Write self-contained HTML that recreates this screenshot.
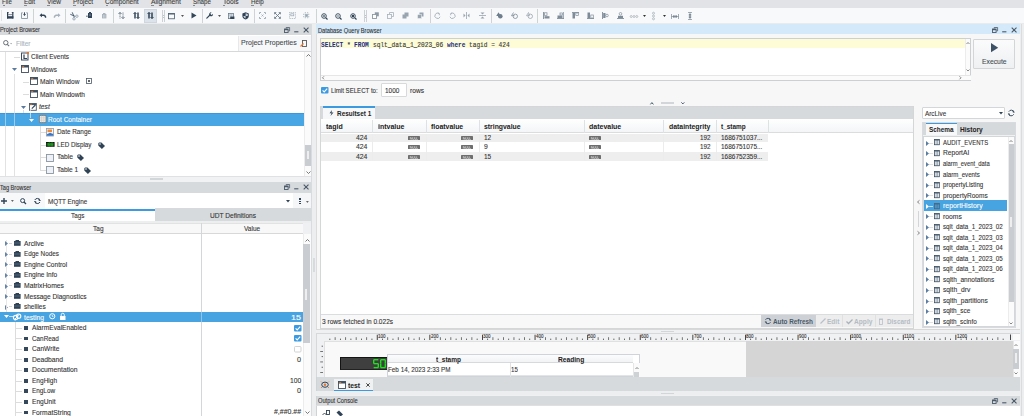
<!DOCTYPE html><html><head><meta charset="utf-8"><style>
*{margin:0;padding:0;box-sizing:border-box}
html,body{width:1024px;height:416px;overflow:hidden;background:#eef0f2;font-family:"Liberation Sans",sans-serif;color:#333}
div{position:absolute}
.t{white-space:nowrap;transform-origin:0 0;-webkit-text-stroke:0.1px currentColor}
svg{position:absolute;overflow:visible}
</style></head><body>
<div style="left:0px;top:0px;width:1024px;height:8px;background:#e1e3e6"></div>
<div class="t" style="left:2.4px;top:-2.05px;font-size:7.5px;line-height:7.5px;color:#3c3c3c;font-family:'Liberation Sans',sans-serif;transform:scale(0.8110,1.0);transform-origin:0 6.35px;">File</div>
<div style="left:2.6999999999999997px;top:5.2px;width:2.4px;height:0.6px;background:#8a8a8a"></div>
<div class="t" style="left:24px;top:-2.05px;font-size:7.5px;line-height:7.5px;color:#3c3c3c;font-family:'Liberation Sans',sans-serif;transform:scale(0.8512,1.0);transform-origin:0 6.35px;">Edit</div>
<div style="left:24.3px;top:5.2px;width:2.4px;height:0.6px;background:#8a8a8a"></div>
<div class="t" style="left:47px;top:-2.05px;font-size:7.5px;line-height:7.5px;color:#3c3c3c;font-family:'Liberation Sans',sans-serif;transform:scale(0.8685,1.0);transform-origin:0 6.35px;">View</div>
<div style="left:47.3px;top:5.2px;width:2.4px;height:0.6px;background:#8a8a8a"></div>
<div class="t" style="left:73px;top:-2.05px;font-size:7.5px;line-height:7.5px;color:#3c3c3c;font-family:'Liberation Sans',sans-serif;transform:scale(0.8568,1.0);transform-origin:0 6.35px;">Project</div>
<div style="left:73.3px;top:5.2px;width:2.4px;height:0.6px;background:#8a8a8a"></div>
<div class="t" style="left:105.2px;top:-2.05px;font-size:7.5px;line-height:7.5px;color:#3c3c3c;font-family:'Liberation Sans',sans-serif;transform:scale(0.8666,1.0);transform-origin:0 6.35px;">Component</div>
<div style="left:105.5px;top:5.2px;width:2.4px;height:0.6px;background:#8a8a8a"></div>
<div class="t" style="left:151px;top:-2.05px;font-size:7.5px;line-height:7.5px;color:#3c3c3c;font-family:'Liberation Sans',sans-serif;transform:scale(0.8936,1.0);transform-origin:0 6.35px;">Alignment</div>
<div style="left:151.3px;top:5.2px;width:2.4px;height:0.6px;background:#8a8a8a"></div>
<div class="t" style="left:192.5px;top:-2.05px;font-size:7.5px;line-height:7.5px;color:#3c3c3c;font-family:'Liberation Sans',sans-serif;transform:scale(0.8300,1.0);transform-origin:0 6.35px;">Shape</div>
<div style="left:192.8px;top:5.2px;width:2.4px;height:0.6px;background:#8a8a8a"></div>
<div class="t" style="left:222.8px;top:-2.05px;font-size:7.5px;line-height:7.5px;color:#3c3c3c;font-family:'Liberation Sans',sans-serif;transform:scale(0.8910,1.0);transform-origin:0 6.35px;">Tools</div>
<div style="left:223.10000000000002px;top:5.2px;width:2.4px;height:0.6px;background:#8a8a8a"></div>
<div class="t" style="left:251px;top:-2.05px;font-size:7.5px;line-height:7.5px;color:#3c3c3c;font-family:'Liberation Sans',sans-serif;transform:scale(0.8299,1.0);transform-origin:0 6.35px;">Help</div>
<div style="left:251.3px;top:5.2px;width:2.4px;height:0.6px;background:#8a8a8a"></div>
<div style="left:0px;top:8px;width:1024px;height:15px;background:#f8f9fa"></div>
<div style="left:0px;top:22.5px;width:1024px;height:1.5px;background:#e9ebed"></div>
<div style="left:33.4px;top:9px;width:0.9px;height:13.5px;background:#d0d3d6"></div>
<div style="left:65.4px;top:9px;width:0.9px;height:13.5px;background:#d0d3d6"></div>
<div style="left:112.5px;top:9px;width:0.9px;height:13.5px;background:#d0d3d6"></div>
<div style="left:201.9px;top:9px;width:0.9px;height:13.5px;background:#d0d3d6"></div>
<div style="left:254.2px;top:9px;width:0.9px;height:13.5px;background:#d0d3d6"></div>
<div style="left:316px;top:9px;width:0.9px;height:13.5px;background:#d0d3d6"></div>
<div style="left:429.5px;top:9px;width:0.9px;height:13.5px;background:#d0d3d6"></div>
<div style="left:490.5px;top:9px;width:0.9px;height:13.5px;background:#d0d3d6"></div>
<div style="left:537.3px;top:9px;width:0.9px;height:13.5px;background:#d0d3d6"></div>
<div style="left:1px;top:10px;width:1.2px;height:11px;background:#dfe1e3"></div>
<div style="left:143.7px;top:9px;width:13.3px;height:14px;background:#dde3ea;border:1px solid #cfd6de"></div>
<div style="left:161.89999999999998px;top:10px;width:3.6px;height:12px;border-left:0.8px solid #cdd1d5;border-right:0.8px solid #cdd1d5"></div>
<div style="left:163.2px;top:14.5px;width:1px;height:1px;background:#c0c5ca"></div>
<div style="left:163.2px;top:16.5px;width:1px;height:1px;background:#c0c5ca"></div>
<div style="left:363.7px;top:10px;width:3.6px;height:12px;border-left:0.8px solid #cdd1d5;border-right:0.8px solid #cdd1d5"></div>
<div style="left:365.0px;top:14.5px;width:1px;height:1px;background:#c0c5ca"></div>
<div style="left:365.0px;top:16.5px;width:1px;height:1px;background:#c0c5ca"></div>
<svg style="left:6.6000000000000005px;top:12.399999999999999px;" width="7" height="7" viewBox="0 0 7 7"><path d="M0.6 0.3v6.2M5.8 0.3v6.2" stroke="#2f4256" stroke-width="1.2"/><path d="M0 0.6h1.6M4.8 0.6h1.6" stroke="#2f4256" stroke-width="1"/><rect x="0" y="4.2" width="6.4" height="2.4" fill="#2f4256"/><path d="M1.2 2.6h4" stroke="#2f4256" stroke-width="0.6"/></svg>
<svg style="left:21.3px;top:12.4px;" width="7" height="7" viewBox="0 0 7 7"><path d="M0.5 0.8v5.7h6v-5.7M0.5 0.8h1.3M5.2 0.8h1.3" fill="none" stroke="#8796a5" stroke-width="0.9"/><path d="M3.5 0.3v3M2.4 2.3l1.1 1.1 1.1-1.1" stroke="#3c4d60" stroke-width="1" fill="none"/></svg>
<svg style="left:39px;top:13.3px;" width="7" height="5" viewBox="0 0 7 5"><path d="M0.5 2.2l2.5-2v4z" fill="#2f4256"/><path d="M2.5 2.2h2a2 2 0 0 1 2 2.5" stroke="#2f4256" stroke-width="1.4" fill="none"/></svg>
<svg style="left:54px;top:13.3px;" width="7" height="5" viewBox="0 0 7 5"><path d="M6.5 2.2l-2.5-2v4z" fill="#a6b1bc"/><path d="M4.5 2.2h-2a2 2 0 0 0-2 2.5" stroke="#a6b1bc" stroke-width="1.4" fill="none"/></svg>
<svg style="left:70.3px;top:11.8px;" width="8.5" height="8.2" viewBox="0 0 8.5 8.2"><path d="M2.2 0.3l1.8 4.2M0.3 2.3l4.2 1.8" stroke="#3d5064" stroke-width="0.9"/><path d="M4 4.2l1.6 0.1M4 4.3l0 1.8" stroke="#7a8a99" stroke-width="0.8"/><circle cx="6.9" cy="4.2" r="1.2" fill="none" stroke="#8a99a8" stroke-width="0.8"/><circle cx="4" cy="6.8" r="1.2" fill="none" stroke="#8a99a8" stroke-width="0.8"/></svg>
<svg style="left:86.2px;top:12.4px;" width="6" height="6" viewBox="0 0 6 6"><rect x="2" y="1" width="4" height="5" fill="#2f4256"/><rect x="3" y="0" width="2" height="1.2" fill="#2f4256"/><path d="M3 2.2h2M3 3.4h2" stroke="#8898a8" stroke-width="0.5"/><path d="M0 4.2h1.8" stroke="#4a5d70" stroke-width="0.9"/></svg>
<svg style="left:101.8px;top:13px;" width="4.5" height="5.5" viewBox="0 0 4.5 5.5"><rect x="0" y="1" width="4.4" height="4.4" fill="#aab4be"/><rect x="1" y="0" width="2.4" height="1" fill="#aab4be"/><path d="M1.5 1.8v3M2.9 1.8v3" stroke="#dfe3e7" stroke-width="0.5"/></svg>
<svg style="left:117.5px;top:12.2px;" width="7" height="7" viewBox="0 0 7 7"><path d="M2 0.5v6M5 0.5v6" stroke="#5d6f82" stroke-width="0.9" stroke-dasharray="1.2 0.6"/><path d="M0.5 2l1.5-1.5 1.5 1.5M3.5 5l1.5 1.5 1.5-1.5" stroke="#4d5f72" stroke-width="0.9" fill="none"/></svg>
<svg style="left:132.5px;top:12.2px;" width="7" height="7" viewBox="0 0 7 7"><path d="M2 0.5v6M5 0.5v6" stroke="#33465a" stroke-width="1.5"/><path d="M0.5 2l1.5-1.5 1.5 1.5M3.5 5l1.5 1.5 1.5-1.5" stroke="#33465a" stroke-width="1" fill="none"/></svg>
<svg style="left:146.5px;top:12.2px;" width="7" height="7" viewBox="0 0 7 7"><path d="M2 0.5v6M5 0.5v6" stroke="#2f4256" stroke-width="1.5"/><path d="M0.5 2l1.5-1.5 1.5 1.5M3.5 5l1.5 1.5 1.5-1.5" stroke="#2f4256" stroke-width="1" fill="none"/></svg>
<svg style="left:168px;top:12.7px;" width="7" height="6.2" viewBox="0 0 7 6.2"><rect x="0.4" y="0.4" width="6.2" height="5.4" fill="none" stroke="#4a5d70" stroke-width="0.8"/><rect x="0.4" y="0.4" width="6.2" height="1.1" fill="#4a5d70"/></svg>
<svg style="left:181px;top:15px;" width="3" height="2" viewBox="0 0 3 2"><path d="M0 0h3l-1.5 2z" fill="#555"/></svg>
<svg style="left:190.5px;top:12.3px;" width="6" height="7" viewBox="0 0 6 7"><path d="M0.5 0.5l5 3-5 3z" fill="#33465a"/></svg>
<svg style="left:206px;top:12.2px;" width="7" height="7" viewBox="0 0 7 7"><path d="M0.8 6.2l3.2-3.2" stroke="#33465a" stroke-width="1.2" stroke-linecap="round"/><path d="M3.4 3.4a2 2 0 0 1 2.2-3l-1.2 1.2 0.4 1 1 0.4 1.2-1.2a2 2 0 0 1-3 2.2z" fill="#33465a"/></svg>
<svg style="left:218px;top:15px;" width="3" height="2" viewBox="0 0 3 2"><path d="M0 0h3l-1.5 2z" fill="#555"/></svg>
<svg style="left:228px;top:12.7px;" width="6.5" height="6" viewBox="0 0 6.5 6"><rect x="0.4" y="0.4" width="5" height="5.2" fill="none" stroke="#6a7b8c" stroke-width="0.8"/><path d="M0.4 2h5M2 0.4v5.2M3.7 0.4v5.2" stroke="#8a99a8" stroke-width="0.5"/><rect x="2.2" y="3.5" width="4.2" height="2.5" fill="#33465a"/></svg>
<svg style="left:241.8px;top:12.2px;" width="7.2" height="7.5" viewBox="0 0 7.2 7.5"><path d="M3.6 0.3l3.2 1.1v2.6c0 1.9-1.4 2.9-3.2 3.5-1.8-0.6-3.2-1.6-3.2-3.5v-2.6z" fill="#2f4256"/><path d="M3.6 1.3l2.2 0.8v1.9h-2.2zM3.6 4h-2.2c0.1 1.2 1 1.9 2.2 2.4z" fill="#c7d0d9"/></svg>
<svg style="left:259.3px;top:12.2px;" width="7" height="7" viewBox="0 0 7 7"><path d="M0.5 2v-1.5h1.5M5 0.5h1.5v1.5M6.5 5v1.5h-1.5M2 6.5h-1.5v-1.5" fill="none" stroke="#97a5b2" stroke-width="0.9"/><path d="M2.5 2.5l2 2M4.5 2.5l-2 2" stroke="#97a5b2" stroke-width="0.7"/></svg>
<svg style="left:274.2px;top:12.2px;" width="7" height="7" viewBox="0 0 7 7"><path d="M0.8 0.8l5.4 5.4M6.2 0.8l-5.4 5.4" stroke="#6d7d8c" stroke-width="0.9"/><path d="M0.5 2.3v-1.8h1.8M4.7 0.5h1.8v1.8M6.5 4.7v1.8h-1.8M2.3 6.5h-1.8v-1.8" fill="none" stroke="#6d7d8c" stroke-width="0.8"/></svg>
<svg style="left:289.0px;top:12.2px;" width="7" height="7" viewBox="0 0 7 7"><rect x="0.5" y="0.5" width="6" height="6" fill="none" stroke="#97a5b2" stroke-width="0.7" stroke-dasharray="1 0.8"/><rect x="1.8" y="1.8" width="3" height="2" fill="none" stroke="#97a5b2" stroke-width="0.7"/></svg>
<svg style="left:303.1px;top:12.2px;" width="7" height="7" viewBox="0 0 7 7"><path d="M0 2.3h7M0 4.7h7M2.3 0v7M4.7 0v7" stroke="#97a5b2" stroke-width="0.7" stroke-dasharray="1 0.7"/><rect x="2.3" y="2.3" width="2.4" height="2.4" fill="#97a5b2"/></svg>
<svg style="left:320.9px;top:12.5px;" width="7" height="7" viewBox="0 0 7 7"><circle cx="3" cy="3" r="2.3" fill="none" stroke="#2f4256" stroke-width="0.9"/><path d="M4.6 4.6l1.9 1.9" stroke="#2f4256" stroke-width="1.2"/><path d="M1.9 3h2.2M3 1.9v2.2" stroke="#2f4256" stroke-width="0.7"/></svg>
<svg style="left:335.4px;top:12.5px;" width="7" height="7" viewBox="0 0 7 7"><circle cx="3" cy="3" r="2.3" fill="none" stroke="#2f4256" stroke-width="0.9"/><path d="M4.6 4.6l1.9 1.9" stroke="#2f4256" stroke-width="1.2"/><path d="M1.9 3h2.2" stroke="#2f4256" stroke-width="0.7"/></svg>
<svg style="left:350.3px;top:12.5px;" width="7" height="7" viewBox="0 0 7 7"><circle cx="3" cy="3" r="2.3" fill="none" stroke="#2f4256" stroke-width="0.9"/><path d="M4.6 4.6l1.9 1.9" stroke="#2f4256" stroke-width="1.2"/><rect x="1.9" y="1.9" width="2.2" height="2.2" fill="#2f4256"/></svg>
<svg style="left:372.1px;top:12.3px;" width="7" height="7" viewBox="0 0 7 7"><rect x="2.8" y="0.3" width="4" height="4" fill="#8d99a5"/><rect x="0.5" y="2.5" width="4" height="4" fill="#fff" stroke="#8d99a5" stroke-width="0.9"/></svg>
<svg style="left:387.0px;top:12.3px;" width="7" height="7" viewBox="0 0 7 7"><path d="M2.5 2v-1.5h4v4h-1.5" fill="none" stroke="#a6b0ba" stroke-width="0.8"/><rect x="0.5" y="2.5" width="4" height="4" fill="none" stroke="#a6b0ba" stroke-width="0.8"/></svg>
<svg style="left:401.8px;top:12.3px;" width="7" height="7" viewBox="0 0 7 7"><rect x="2.5" y="0.5" width="4" height="4" fill="#98a4af"/><rect x="0.5" y="2.5" width="4" height="4" fill="#98a4af"/></svg>
<svg style="left:416.7px;top:12.3px;" width="7" height="7" viewBox="0 0 7 7"><rect x="2.5" y="0.5" width="4" height="4" fill="#98a4af"/><rect x="0.5" y="2.5" width="4" height="4" fill="#98a4af" stroke="#f8f9fa" stroke-width="0.5"/></svg>
<svg style="left:433.8px;top:12.3px;" width="7" height="7" viewBox="0 0 7 7"><path d="M5.2 1.6a2.7 2.7 0 1 0 0.9 3.2" fill="none" stroke="#a3aeb9" stroke-width="0.9"/><path d="M4 0.8l1.5 0.9-0.3 1.6" fill="none" stroke="#a3aeb9" stroke-width="0.8"/></svg>
<svg style="left:448.7px;top:12.3px;" width="7" height="7" viewBox="0 0 7 7"><path d="M1.8 1.6a2.7 2.7 0 1 1 -0.9 3.2" fill="none" stroke="#a3aeb9" stroke-width="0.9"/><path d="M3 0.8l-1.5 0.9 0.3 1.6" fill="none" stroke="#a3aeb9" stroke-width="0.8"/></svg>
<svg style="left:463px;top:12.3px;" width="7" height="7" viewBox="0 0 7 7"><path d="M3.5 0v7" stroke="#98a3ae" stroke-width="0.8"/><path d="M0.5 1.5l2 2-2 2zM6.5 1.5l-2 2 2 2z" fill="#98a3ae"/></svg>
<svg style="left:478.5px;top:12.3px;" width="7" height="7" viewBox="0 0 7 7"><path d="M0 3.5h7" stroke="#98a3ae" stroke-width="0.8"/><path d="M1.5 0.5l2 2 2-2zM1.5 6.5l2-2 2 2z" fill="#98a3ae"/></svg>
<svg style="left:496.3px;top:12.3px;" width="7" height="7" viewBox="0 0 7 7"><path d="M2.5 0.3l-2.3 3.6h4.6z" fill="#6f7e8d"/><circle cx="4.3" cy="4.3" r="2.3" fill="#6f7e8d"/></svg>
<svg style="left:511.2px;top:12.3px;" width="7" height="7" viewBox="0 0 7 7"><path d="M2.5 0.5l-2 3.2h3" fill="none" stroke="#7d8b99" stroke-width="0.8"/><circle cx="4.3" cy="4.3" r="2.2" fill="none" stroke="#7d8b99" stroke-width="0.8"/></svg>
<svg style="left:526px;top:12.3px;" width="7" height="7" viewBox="0 0 7 7"><path d="M2.5 0.5l-2 3.2h3z" fill="none" stroke="#98a4b0" stroke-width="0.7"/><circle cx="4.3" cy="4.3" r="2.2" fill="none" stroke="#98a4b0" stroke-width="0.8"/></svg>
<svg style="left:542.5px;top:12.3px;" width="7" height="7" viewBox="0 0 7 7"><path d="M0.5 0v7" stroke="#7e8c9a" stroke-width="0.9"/><rect x="1.5" y="4.2" width="5" height="2.3" fill="#7e8c9a"/><rect x="1.5" y="0.8" width="2.5" height="2.5" fill="none" stroke="#7e8c9a" stroke-width="0.7"/></svg>
<svg style="left:557.3px;top:12.3px;" width="7" height="7" viewBox="0 0 7 7"><path d="M0 6.5h7" stroke="#7e8c9a" stroke-width="0.9"/><rect x="0.5" y="3.5" width="5" height="2.5" fill="#7e8c9a"/><rect x="3" y="1" width="2.5" height="2" fill="none" stroke="#7e8c9a" stroke-width="0.7"/><path d="M6.5 0v7" stroke="#7e8c9a" stroke-width="0.7"/></svg>
<svg style="left:572.1px;top:12.3px;" width="7" height="7" viewBox="0 0 7 7"><path d="M0 0.5h7" stroke="#7e8c9a" stroke-width="0.9"/><rect x="0.5" y="1" width="2.5" height="5.5" fill="#7e8c9a"/><rect x="3.8" y="1" width="2.5" height="2.5" fill="none" stroke="#7e8c9a" stroke-width="0.7"/></svg>
<svg style="left:587.0px;top:12.3px;" width="7" height="7" viewBox="0 0 7 7"><path d="M0 6.5h7" stroke="#7e8c9a" stroke-width="0.9"/><rect x="0.5" y="0.5" width="2.5" height="5.5" fill="#7e8c9a"/><rect x="3.8" y="3" width="2.5" height="3" fill="none" stroke="#7e8c9a" stroke-width="0.7"/></svg>
<svg style="left:601.8px;top:12.3px;" width="7" height="7" viewBox="0 0 7 7"><path d="M0.5 0v7" stroke="#7e8c9a" stroke-width="0.9"/><rect x="1.2" y="1" width="2.3" height="5" fill="#7e8c9a"/><circle cx="5" cy="3.5" r="1.3" fill="none" stroke="#7e8c9a" stroke-width="0.7"/></svg>
<svg style="left:616.8px;top:12.3px;" width="7" height="7" viewBox="0 0 7 7"><path d="M0 6.5h7" stroke="#7e8c9a" stroke-width="0.9"/><rect x="1" y="3.8" width="5" height="2.3" fill="#7e8c9a"/><circle cx="3.5" cy="1.8" r="1.3" fill="none" stroke="#7e8c9a" stroke-width="0.7"/></svg>
<svg style="left:630px;top:14.5px;" width="8" height="3" viewBox="0 0 8 3"><circle cx="1.2" cy="1.5" r="1" fill="none" stroke="#a0aab4" stroke-width="0.7"/><circle cx="4" cy="1.5" r="1" fill="none" stroke="#a0aab4" stroke-width="0.7"/><circle cx="6.8" cy="1.5" r="1" fill="none" stroke="#a0aab4" stroke-width="0.7"/></svg>
<svg style="left:643px;top:15px;" width="3" height="2" viewBox="0 0 3 2"><path d="M0 0h3l-1.5 2z" fill="#333"/></svg>
<svg style="left:651.5px;top:12px;" width="3" height="8" viewBox="0 0 3 8"><circle cx="1.5" cy="1.2" r="1" fill="none" stroke="#a0aab4" stroke-width="0.7"/><circle cx="1.5" cy="4" r="1" fill="none" stroke="#a0aab4" stroke-width="0.7"/><circle cx="1.5" cy="6.8" r="1" fill="none" stroke="#a0aab4" stroke-width="0.7"/></svg>
<svg style="left:662.5px;top:15px;" width="3" height="2" viewBox="0 0 3 2"><path d="M0 0h3l-1.5 2z" fill="#333"/></svg>
<svg style="left:671px;top:13.5px;" width="8" height="5" viewBox="0 0 8 5"><path d="M0.5 0v5M7.5 0v5M0.5 2.5h7" stroke="#7d8b99" stroke-width="0.7"/><rect x="2.2" y="1.3" width="1.4" height="2.4" fill="#6d7b89"/><rect x="4.4" y="1.3" width="1.4" height="2.4" fill="#6d7b89"/></svg>
<svg style="left:686.5px;top:12px;" width="6" height="8" viewBox="0 0 6 8"><path d="M1 0.5h4M1 7.5h4M3 0.5v7" stroke="#7d8b99" stroke-width="0.7"/><rect x="1.8" y="2.2" width="2.4" height="1.4" fill="#6d7b89"/><rect x="1.8" y="4.4" width="2.4" height="1.4" fill="#6d7b89"/></svg>
<div style="left:0px;top:24px;width:311.5px;height:11px;background:#d7dadd"></div>
<div class="t" style="left:0px;top:27.40px;font-size:6.5px;line-height:6.5px;color:#333;font-family:'Liberation Sans',sans-serif;transform:scale(0.8720,1.0);transform-origin:0 5.50px;">Project Browser</div>
<svg style="left:284px;top:26.5px;" width="26" height="6" viewBox="0 0 26 6"><rect x="0.5" y="2" width="3.6" height="3.5" fill="none" stroke="#4a5868" stroke-width="0.9"/><rect x="0.5" y="2" width="3.6" height="1.2" fill="#4a5868"/><path d="M2.2 1.6v-1.1h3.4v3.4h-1.1" fill="none" stroke="#4a5868" stroke-width="0.8"/><path d="M10.2 4.8h4.2" stroke="#4a5868" stroke-width="1.1"/><path d="M19.7 0.6l4.8 4.8M24.5 0.6l-4.8 4.8" stroke="#4a5868" stroke-width="1.1"/></svg>
<div style="left:0px;top:35px;width:311.5px;height:16px;background:#fff"></div>
<div style="left:0px;top:50.5px;width:311.5px;height:1.2px;background:#d6d8da"></div>
<svg style="left:3px;top:40.3px;" width="9" height="7" viewBox="0 0 9 7"><circle cx="2.8" cy="2.7" r="2.2" fill="none" stroke="#6a7078" stroke-width="1"/><path d="M4.3 4.3l1.8 1.8" stroke="#6a7078" stroke-width="1.1"/><path d="M7.2 3.3h1.8l-0.9 1z" fill="#6a7078"/></svg>
<div class="t" style="left:15.6px;top:39.67px;font-size:7px;line-height:7px;color:#a9b2bb;font-family:'Liberation Sans',sans-serif;transform:scale(0.9258,1.0);transform-origin:0 5.93px;">Filter</div>
<div style="left:237.5px;top:35.5px;width:74px;height:15px;background:#f6f7f8;border-left:1px solid #e8e8e8"></div>
<div class="t" style="left:241.3px;top:39.11px;font-size:7.2px;line-height:7.2px;color:#454b52;font-family:'Liberation Sans',sans-serif;transform:scale(0.9752,1.0);transform-origin:0 6.09px;">Project Properties</div>
<svg style="left:300px;top:39.5px;" width="7" height="7" viewBox="0 0 7 7"><rect x="2.5" y="0.5" width="4" height="6" fill="none" stroke="#555" stroke-width="0.9"/><path d="M0.5 6.5l3-3" stroke="#e8772e" stroke-width="1.3"/></svg>
<div style="left:0px;top:52px;width:304px;height:124px;background:#fff"></div>
<div style="left:5px;top:52px;width:0px;height:124px;border-left:1px solid #e2e2e2"></div>
<div style="left:13.8px;top:74px;width:0px;height:102px;border-left:1px solid #e2e2e2"></div>
<div style="left:22.5px;top:110px;width:0px;height:8px;border-left:1px solid #dcdcdc"></div>
<div style="left:39.9px;top:126px;width:0px;height:44px;border-left:1px solid #dcdcdc"></div>
<div style="left:0px;top:113.3px;width:304px;height:12.3px;background:#48a6e4;border-top:1px solid #3b98de"></div>
<div class="t" style="left:31px;top:53.25px;font-size:7.5px;line-height:7.5px;color:#333;font-family:'Liberation Sans',sans-serif;transform:scale(0.8600,1.0);transform-origin:0 6.35px;">Client Events</div>
<div class="t" style="left:31px;top:65.75px;font-size:7.5px;line-height:7.5px;color:#333;font-family:'Liberation Sans',sans-serif;transform:scale(0.8513,1.0);transform-origin:0 6.35px;">Windows</div>
<div class="t" style="left:40px;top:78.25px;font-size:7.5px;line-height:7.5px;color:#333;font-family:'Liberation Sans',sans-serif;transform:scale(0.8753,1.0);transform-origin:0 6.35px;">Main Window</div>
<div class="t" style="left:40px;top:90.75px;font-size:7.5px;line-height:7.5px;color:#333;font-family:'Liberation Sans',sans-serif;transform:scale(0.8778,1.0);transform-origin:0 6.35px;">Main Windowth</div>
<div class="t" style="left:38.9px;top:103.25px;font-size:7.5px;line-height:7.5px;color:#333;font-style:italic;font-family:'Liberation Sans',sans-serif;transform:scale(0.8935,1.0);transform-origin:0 6.35px;">test</div>
<div class="t" style="left:48px;top:115.75px;font-size:7.5px;line-height:7.5px;color:#ffffff;font-family:'Liberation Sans',sans-serif;transform:scale(0.8723,1.0);transform-origin:0 6.35px;">Root Container</div>
<div class="t" style="left:56.6px;top:128.25px;font-size:7.5px;line-height:7.5px;color:#333;font-family:'Liberation Sans',sans-serif;transform:scale(0.8495,1.0);transform-origin:0 6.35px;">Date Range</div>
<div class="t" style="left:56.6px;top:140.75px;font-size:7.5px;line-height:7.5px;color:#333;font-family:'Liberation Sans',sans-serif;transform:scale(0.8337,1.0);transform-origin:0 6.35px;">LED Display</div>
<div class="t" style="left:56.6px;top:153.25px;font-size:7.5px;line-height:7.5px;color:#333;font-family:'Liberation Sans',sans-serif;transform:scale(0.8924,1.0);transform-origin:0 6.35px;">Table</div>
<div class="t" style="left:56.6px;top:165.75px;font-size:7.5px;line-height:7.5px;color:#333;font-family:'Liberation Sans',sans-serif;transform:scale(0.8725,1.0);transform-origin:0 6.35px;">Table 1</div>
<svg style="left:21px;top:51.8px;" width="8" height="8.5" viewBox="0 0 8 8.5"><rect x="0.5" y="1" width="6.5" height="7" fill="#fff" stroke="#3d4d5e" stroke-width="1"/><path d="M3 2.5v4h3" stroke="#2f4256" stroke-width="1.2" fill="none"/><rect x="6" y="0" width="2" height="2" fill="#e8772e"/></svg>
<svg style="left:21px;top:64.5px;" width="8" height="8" viewBox="0 0 8 8"><rect x="0.5" y="0.5" width="7" height="7" fill="#fff" stroke="#3d4d5e" stroke-width="0.9"/><rect x="0.5" y="0.5" width="7" height="2" fill="#3d4d5e"/><rect x="1.2" y="1" width="2" height="0.9" fill="#e07a2e"/></svg>
<svg style="left:29.5px;top:77.3px;" width="8" height="8" viewBox="0 0 8 8"><rect x="0.5" y="0.5" width="7" height="7" fill="#fff" stroke="#3d4d5e" stroke-width="0.9"/><rect x="0.5" y="0.5" width="7" height="2" fill="#3d4d5e"/><rect x="1.2" y="1" width="2" height="0.9" fill="#e07a2e"/></svg>
<svg style="left:85.5px;top:77.6px;" width="6" height="6" viewBox="0 0 6 6"><rect x="0.5" y="0.5" width="5" height="5" fill="#fff" stroke="#4a5868" stroke-width="0.8"/><circle cx="3" cy="3" r="1" fill="#333"/></svg>
<svg style="left:29.5px;top:90px;" width="8" height="8" viewBox="0 0 8 8"><rect x="0.5" y="0.5" width="7" height="7" fill="#fff" stroke="#3d4d5e" stroke-width="0.9"/><rect x="0.5" y="0.5" width="7" height="2" fill="#3d4d5e"/><rect x="1.2" y="1" width="2" height="0.9" fill="#e07a2e"/></svg>
<svg style="left:29.2px;top:102.8px;" width="8" height="8" viewBox="0 0 8 8"><rect x="0.5" y="0.5" width="6.8" height="6.8" fill="#fff" stroke="#4a5a6a" stroke-width="0.9"/><rect x="0.5" y="0.5" width="6.8" height="1.6" fill="#4a5a6a"/><rect x="1.1" y="0.9" width="1.8" height="0.8" fill="#e07a2e"/><path d="M2.8 5.6l3.6-3.6" stroke="#2f4256" stroke-width="1.1"/></svg>
<div style="left:5px;top:113.3px;width:0px;height:12.3px;border-left:1px solid rgba(255,255,255,0.45)"></div>
<div style="left:13.8px;top:113.3px;width:0px;height:12.3px;border-left:1px solid rgba(255,255,255,0.45)"></div>
<div style="left:30.3px;top:110px;width:0px;height:8px;border-left:1px solid rgba(255,255,255,0.6)"></div>
<svg style="left:38.5px;top:115px;" width="7.5" height="8" viewBox="0 0 7.5 8"><rect x="0.5" y="0.5" width="6.5" height="7" fill="#eceae6" stroke="#8a7f76" stroke-width="0.9"/><path d="M2.6 0.5v7M4.8 0.5v7M0.5 2.8h6.5M0.5 5.2h6.5" stroke="#c8c2bc" stroke-width="0.5"/></svg>
<svg style="left:46px;top:128px;" width="8" height="8.5" viewBox="0 0 8 8.5"><rect x="0.5" y="0.5" width="7" height="7.5" fill="#f4f6f8" stroke="#8d99a5" stroke-width="0.8"/><rect x="1.5" y="1.5" width="4.5" height="2.6" fill="#ef8a35"/><path d="M1 6.2l3-1.5 3.2 1.2v1.8h-6.2z" fill="#3877c8"/></svg>
<svg style="left:45.8px;top:142.3px;" width="8.6" height="4.8" viewBox="0 0 8.6 4.8"><rect x="0" y="0" width="8.6" height="4.8" fill="#141414"/><path d="M1.2 1v2.8M2.6 1h1.6v2.8h-1.6zM5.2 1h1.8v2.8h-1.8zM2.6 2.4h1.6M5.2 2.4h1.8" fill="none" stroke="#28c828" stroke-width="0.7"/></svg>
<svg style="left:46px;top:153.5px;" width="8" height="8" viewBox="0 0 8 8"><rect x="0.5" y="0.5" width="7" height="7" fill="#eef2f6" stroke="#8a96a2" stroke-width="0.9"/></svg>
<svg style="left:46px;top:166px;" width="8" height="8" viewBox="0 0 8 8"><rect x="0.5" y="0.5" width="7" height="7" fill="#eef2f6" stroke="#8a96a2" stroke-width="0.9"/></svg>
<svg style="left:97.5px;top:141.5px;" width="7" height="7" viewBox="0 0 7 7"><path d="M0.3 1.2v2.3l3.6 3.6 3.1-3.1-3.6-3.6h-2.3z" fill="#2f4256"/><circle cx="2" cy="2" r="0.8" fill="#fff"/></svg>
<svg style="left:77px;top:154px;" width="7" height="7" viewBox="0 0 7 7"><path d="M0.3 1.2v2.3l3.6 3.6 3.1-3.1-3.6-3.6h-2.3z" fill="#2f4256"/><circle cx="2" cy="2" r="0.8" fill="#fff"/></svg>
<svg style="left:84px;top:166.5px;" width="7" height="7" viewBox="0 0 7 7"><path d="M0.3 1.2v2.3l3.6 3.6 3.1-3.1-3.6-3.6h-2.3z" fill="#2f4256"/><circle cx="2" cy="2" r="0.8" fill="#fff"/></svg>
<svg style="left:12px;top:67.5px;" width="5" height="3" viewBox="0 0 5 3"><path d="M0 0h5l-2.5 3z" fill="#5a7aa0"/></svg>
<svg style="left:20.5px;top:105.5px;" width="5" height="3" viewBox="0 0 5 3"><path d="M0 0h5l-2.5 3z" fill="#5a7aa0"/></svg>
<svg style="left:28.5px;top:118.5px;" width="5" height="3" viewBox="0 0 5 3"><path d="M0 0h5l-2.5 3z" fill="#fff"/></svg>
<div style="left:14px;top:56.5px;width:6px;height:0px;border-top:1px solid #dcdcdc"></div>
<div style="left:23px;top:81.5px;width:5.5px;height:0px;border-top:1px solid #dcdcdc"></div>
<div style="left:23px;top:94px;width:5.5px;height:0px;border-top:1px solid #dcdcdc"></div>
<div style="left:40px;top:132px;width:5.5px;height:0px;border-top:1px solid #dcdcdc"></div>
<div style="left:40px;top:144.5px;width:5.5px;height:0px;border-top:1px solid #dcdcdc"></div>
<div style="left:40px;top:157px;width:5.5px;height:0px;border-top:1px solid #dcdcdc"></div>
<div style="left:40px;top:169.5px;width:5.5px;height:0px;border-top:1px solid #dcdcdc"></div>
<div style="left:304px;top:52px;width:7.5px;height:124px;background:#fbfbfb;border-left:1px solid #ececec"></div>
<svg style="left:305.5px;top:53.5px;" width="5" height="3" viewBox="0 0 5 3"><path d="M0.5 2.5l2-2 2 2" fill="none" stroke="#555" stroke-width="0.8"/></svg>
<svg style="left:305.5px;top:171px;" width="5" height="3" viewBox="0 0 5 3"><path d="M0.5 0.5l2 2 2-2" fill="none" stroke="#555" stroke-width="0.8"/></svg>
<div style="left:304.5px;top:145.3px;width:6px;height:20.3px;background:#c9cdd2"></div>
<div style="left:306.5px;top:151px;width:2px;height:8px;border-left:0.6px solid #eee;border-right:0.6px solid #eee"></div>
<div style="left:0px;top:175.6px;width:311.5px;height:6.4px;background:#f1f2f4"></div>
<div style="left:0px;top:175.6px;width:311.5px;height:1px;background:#dfe1e3"></div>
<div style="left:150px;top:178.2px;width:13px;height:1.6px;background:#d3d6d9"></div>
<div style="left:0px;top:182px;width:311.5px;height:10.5px;background:#d7dadd"></div>
<div class="t" style="left:0px;top:184.67px;font-size:6.3px;line-height:6.3px;color:#333;font-family:'Liberation Sans',sans-serif;transform:scale(0.8926,1.0);transform-origin:0 5.33px;">Tag Browser</div>
<svg style="left:284px;top:183.8px;" width="26" height="6" viewBox="0 0 26 6"><rect x="0.5" y="2" width="3.6" height="3.5" fill="none" stroke="#4a5868" stroke-width="0.9"/><rect x="0.5" y="2" width="3.6" height="1.2" fill="#4a5868"/><path d="M2.2 1.6v-1.1h3.4v3.4h-1.1" fill="none" stroke="#4a5868" stroke-width="0.8"/><path d="M10.2 4.8h4.2" stroke="#4a5868" stroke-width="1.1"/><path d="M19.7 0.6l4.8 4.8M24.5 0.6l-4.8 4.8" stroke="#4a5868" stroke-width="1.1"/></svg>
<div style="left:0px;top:192.5px;width:311.5px;height:16.5px;background:#f7f8f9"></div>
<svg style="left:1.2px;top:198px;" width="6" height="6" viewBox="0 0 6 6"><path d="M3 0v6M0 3h6" stroke="#2f4256" stroke-width="1.4"/></svg>
<svg style="left:10.6px;top:199.8px;" width="2.8" height="2" viewBox="0 0 2.8 2"><path d="M0 0h2.8l-1.4 2z" fill="#666"/></svg>
<svg style="left:19.5px;top:198.2px;" width="7" height="6" viewBox="0 0 7 6"><circle cx="2.6" cy="2.6" r="2" fill="none" stroke="#2f4256" stroke-width="1"/><path d="M4 4l2 2" stroke="#2f4256" stroke-width="1.2"/></svg>
<svg style="left:34px;top:198.2px;" width="7" height="6" viewBox="0 0 7 6"><path d="M6 2.5a2.8 2.8 0 0 0-5.2-0.5M0.8 3.5a2.8 2.8 0 0 0 5.2 0.5" fill="none" stroke="#2f4256" stroke-width="1"/><path d="M5 0.5v2h1.5M1.8 5.5v-2h-1.5" fill="none" stroke="#2f4256" stroke-width="0.8"/></svg>
<div style="left:45.3px;top:192.8px;width:247.6px;height:16px;background:#fff"></div>
<div class="t" style="left:47.7px;top:197.55px;font-size:7.5px;line-height:7.5px;color:#333;font-family:'Liberation Sans',sans-serif;transform:scale(0.8444,1.0);transform-origin:0 6.35px;">MQTT Engine</div>
<svg style="left:285.5px;top:200px;" width="4" height="2.5" viewBox="0 0 4 2.5"><path d="M0 0h4l-2 2.5z" fill="#2f4256"/></svg>
<div style="left:293px;top:192.8px;width:18.5px;height:16px;background:#f5f6f7"></div>
<div style="left:299.2px;top:198.3px;width:1.4px;height:1.4px;background:#2f4256"></div>
<div style="left:299.2px;top:200.6px;width:1.4px;height:1.4px;background:#2f4256"></div>
<div style="left:299.2px;top:202.9px;width:1.4px;height:1.4px;background:#2f4256"></div>
<svg style="left:305.8px;top:200.5px;" width="2.8" height="2" viewBox="0 0 2.8 2"><path d="M0 0h2.8l-1.4 2z" fill="#666"/></svg>
<div style="left:0px;top:209.3px;width:155px;height:12.1px;background:#fff"></div>
<div style="left:0px;top:209.3px;width:155px;height:1.4px;background:#3b9ae0"></div>
<div style="left:155px;top:208.4px;width:156.5px;height:13.4px;background:#d7dadd;border-bottom:1px solid #cfd2d5"></div>
<div class="t" style="left:70.6px;top:212.05px;font-size:7.5px;line-height:7.5px;color:#333;font-family:'Liberation Sans',sans-serif;transform:scale(0.8459,1.0);transform-origin:0 6.35px;">Tags</div>
<div class="t" style="left:209.8px;top:212.25px;font-size:7.5px;line-height:7.5px;color:#333;font-family:'Liberation Sans',sans-serif;transform:scale(0.8782,1.0);transform-origin:0 6.35px;">UDT Definitions</div>
<div style="left:0px;top:221.4px;width:311.5px;height:1.6px;background:#eceef0"></div>
<div style="left:0px;top:223px;width:302.5px;height:10.5px;background:#f8f8f8;border-top:1px solid #e2e2e2;border-bottom:1px solid #d8d8d8"></div>
<div class="t" style="left:93.4px;top:225.25px;font-size:7.5px;line-height:7.5px;color:#333;font-family:'Liberation Sans',sans-serif;transform:scale(0.8684,1.0);transform-origin:0 6.35px;">Tag</div>
<div class="t" style="left:244.1px;top:225.25px;font-size:7.5px;line-height:7.5px;color:#333;font-family:'Liberation Sans',sans-serif;transform:scale(0.8644,1.0);transform-origin:0 6.35px;">Value</div>
<div style="left:0px;top:233.5px;width:302.5px;height:182.5px;background:#fff"></div>
<div style="left:201.4px;top:223px;width:1px;height:193px;background:#d3d6da"></div>
<div style="left:0px;top:311.7px;width:302.5px;height:9.9px;background:#48a3e1"></div>
<div style="left:201.4px;top:311.7px;width:1px;height:9.9px;background:#8cc4ea"></div>
<div style="left:6px;top:240px;width:0px;height:66px;border-left:1px solid #e8e8e8"></div>
<div style="left:14.8px;top:322px;width:0px;height:94px;border-left:1px solid #dcdcdc"></div>
<div class="t" style="left:23.8px;top:239.77px;font-size:7px;line-height:7px;color:#333;font-family:'Liberation Sans',sans-serif;transform:scale(0.9499,1.0);transform-origin:0 5.93px;">Arclive</div>
<svg style="left:14px;top:240.0px;" width="7" height="6" viewBox="0 0 7 6"><rect x="0" y="1" width="6.6" height="4.8" fill="#2f4256"/><rect x="1.5" y="0" width="3.5" height="1.3" fill="#2f4256"/><path d="M0 3h6.6" stroke="#7b8a99" stroke-width="0.5"/></svg>
<svg style="left:5px;top:241.29999999999998px;" width="3" height="5" viewBox="0 0 3 5"><path d="M0 0v5l3-2.5z" fill="#6784a8"/></svg>
<div style="left:9.4px;top:243.1px;width:3px;height:0px;border-top:1px solid #d6d6d6"></div>
<div class="t" style="left:23.8px;top:250.32px;font-size:7px;line-height:7px;color:#333;font-family:'Liberation Sans',sans-serif;transform:scale(0.9072,1.0);transform-origin:0 5.93px;">Edge Nodes</div>
<svg style="left:14px;top:250.55px;" width="7" height="6" viewBox="0 0 7 6"><rect x="0" y="1" width="6.6" height="4.8" fill="#2f4256"/><rect x="1.5" y="0" width="3.5" height="1.3" fill="#2f4256"/><path d="M0 3h6.6" stroke="#7b8a99" stroke-width="0.5"/></svg>
<svg style="left:5px;top:251.85px;" width="3" height="5" viewBox="0 0 3 5"><path d="M0 0v5l3-2.5z" fill="#6784a8"/></svg>
<div style="left:9.4px;top:253.65px;width:3px;height:0px;border-top:1px solid #d6d6d6"></div>
<div class="t" style="left:23.8px;top:260.87px;font-size:7px;line-height:7px;color:#333;font-family:'Liberation Sans',sans-serif;transform:scale(0.9330,1.0);transform-origin:0 5.93px;">Engine Control</div>
<svg style="left:14px;top:261.1px;" width="7" height="6" viewBox="0 0 7 6"><rect x="0" y="1" width="6.6" height="4.8" fill="#2f4256"/><rect x="1.5" y="0" width="3.5" height="1.3" fill="#2f4256"/><path d="M0 3h6.6" stroke="#7b8a99" stroke-width="0.5"/></svg>
<svg style="left:5px;top:262.40000000000003px;" width="3" height="5" viewBox="0 0 3 5"><path d="M0 0v5l3-2.5z" fill="#6784a8"/></svg>
<div style="left:9.4px;top:264.2px;width:3px;height:0px;border-top:1px solid #d6d6d6"></div>
<div class="t" style="left:23.8px;top:271.42px;font-size:7px;line-height:7px;color:#333;font-family:'Liberation Sans',sans-serif;transform:scale(0.9375,1.0);transform-origin:0 5.93px;">Engine Info</div>
<svg style="left:14px;top:271.65px;" width="7" height="6" viewBox="0 0 7 6"><rect x="0" y="1" width="6.6" height="4.8" fill="#2f4256"/><rect x="1.5" y="0" width="3.5" height="1.3" fill="#2f4256"/><path d="M0 3h6.6" stroke="#7b8a99" stroke-width="0.5"/></svg>
<svg style="left:5px;top:272.95px;" width="3" height="5" viewBox="0 0 3 5"><path d="M0 0v5l3-2.5z" fill="#6784a8"/></svg>
<div style="left:9.4px;top:274.74999999999994px;width:3px;height:0px;border-top:1px solid #d6d6d6"></div>
<div class="t" style="left:23.8px;top:281.97px;font-size:7px;line-height:7px;color:#333;font-family:'Liberation Sans',sans-serif;transform:scale(0.9691,1.0);transform-origin:0 5.93px;">MatrixHomes</div>
<svg style="left:14px;top:282.2px;" width="7" height="6" viewBox="0 0 7 6"><rect x="0" y="1" width="6.6" height="4.8" fill="#2f4256"/><rect x="1.5" y="0" width="3.5" height="1.3" fill="#2f4256"/><path d="M0 3h6.6" stroke="#7b8a99" stroke-width="0.5"/></svg>
<svg style="left:5px;top:283.5px;" width="3" height="5" viewBox="0 0 3 5"><path d="M0 0v5l3-2.5z" fill="#6784a8"/></svg>
<div style="left:9.4px;top:285.29999999999995px;width:3px;height:0px;border-top:1px solid #d6d6d6"></div>
<div class="t" style="left:23.8px;top:292.52px;font-size:7px;line-height:7px;color:#333;font-family:'Liberation Sans',sans-serif;transform:scale(0.9387,1.0);transform-origin:0 5.93px;">Message Diagnostics</div>
<svg style="left:14px;top:292.75px;" width="7" height="6" viewBox="0 0 7 6"><rect x="0" y="1" width="6.6" height="4.8" fill="#2f4256"/><rect x="1.5" y="0" width="3.5" height="1.3" fill="#2f4256"/><path d="M0 3h6.6" stroke="#7b8a99" stroke-width="0.5"/></svg>
<svg style="left:5px;top:294.05px;" width="3" height="5" viewBox="0 0 3 5"><path d="M0 0v5l3-2.5z" fill="#6784a8"/></svg>
<div style="left:9.4px;top:295.84999999999997px;width:3px;height:0px;border-top:1px solid #d6d6d6"></div>
<div class="t" style="left:23.8px;top:303.07px;font-size:7px;line-height:7px;color:#333;font-family:'Liberation Sans',sans-serif;transform:scale(0.9296,1.0);transform-origin:0 5.93px;">shellies</div>
<svg style="left:14px;top:303.3px;" width="7" height="6" viewBox="0 0 7 6"><rect x="0" y="1" width="6.6" height="4.8" fill="#2f4256"/><rect x="1.5" y="0" width="3.5" height="1.3" fill="#2f4256"/><path d="M0 3h6.6" stroke="#7b8a99" stroke-width="0.5"/></svg>
<svg style="left:5px;top:304.6px;" width="3" height="5" viewBox="0 0 3 5"><path d="M0 0v5l3-2.5z" fill="#6784a8"/></svg>
<div style="left:9.4px;top:306.4px;width:3px;height:0px;border-top:1px solid #d6d6d6"></div>
<div class="t" style="left:23.8px;top:313.57px;font-size:7px;line-height:7px;color:#fff;font-family:'Liberation Sans',sans-serif;transform:scale(0.9698,1.0);transform-origin:0 5.93px;">testing</div>
<svg style="left:4.3px;top:315.2px;" width="5" height="3" viewBox="0 0 5 3"><path d="M0 0h5l-2.5 3z" fill="#fff"/></svg>
<svg style="left:13.2px;top:312.6px;" width="8.5" height="8" viewBox="0 0 8.5 8"><circle cx="2.6" cy="4.6" r="2.2" fill="none" stroke="#fff" stroke-width="1.1"/><circle cx="5.6" cy="3.2" r="2.2" fill="none" stroke="#fff" stroke-width="1.1"/><path d="M1.5 6.5l1.5-1.5M4.5 2.5l1.8-0.6" stroke="#fff" stroke-width="1"/><circle cx="2" cy="6.6" r="1" fill="#fff"/></svg>
<div style="left:6.2px;top:305px;width:0px;height:6.5px;border-left:1px solid #e0e0e0"></div>
<div style="left:8.5px;top:316.2px;width:4px;height:0px;border-top:1px solid #bfe0f6"></div>
<svg style="left:48.7px;top:313.3px;" width="6.5" height="6.5" viewBox="0 0 6.5 6.5"><circle cx="3.25" cy="3.25" r="2.6" fill="none" stroke="#fff" stroke-width="1"/><path d="M3.25 1.8v1.6h1.2" stroke="#fff" stroke-width="0.8" fill="none"/></svg>
<svg style="left:60px;top:313px;" width="5.5" height="7" viewBox="0 0 5.5 7"><rect x="0" y="3" width="5.5" height="4" fill="#fff"/><path d="M1.2 3v-1.2a1.55 1.55 0 0 1 3.1 0v1.2" fill="none" stroke="#fff" stroke-width="0.9"/></svg>
<div class="t" style="left:291px;top:313.57px;font-size:7px;line-height:7px;color:#fff;font-family:'Liberation Sans',sans-serif;transform:scale(1.2845,1.0);transform-origin:0 5.93px;">15</div>
<div class="t" style="left:31.9px;top:324.17px;font-size:7px;line-height:7px;color:#333;font-family:'Liberation Sans',sans-serif;transform:scale(0.9438,1.0);transform-origin:0 5.93px;">AlarmEvalEnabled</div>
<div style="left:24px;top:326.1px;width:3.9px;height:3.8px;background:#34475b"></div>
<div style="left:15.5px;top:327.8px;width:6px;height:0px;border-top:1px solid #dcdcdc"></div>
<div class="t" style="left:31.9px;top:334.72px;font-size:7px;line-height:7px;color:#333;font-family:'Liberation Sans',sans-serif;transform:scale(0.9079,1.0);transform-origin:0 5.93px;">CanRead</div>
<div style="left:24px;top:336.65000000000003px;width:3.9px;height:3.8px;background:#34475b"></div>
<div style="left:15.5px;top:338.35px;width:6px;height:0px;border-top:1px solid #dcdcdc"></div>
<div class="t" style="left:31.9px;top:345.27px;font-size:7px;line-height:7px;color:#333;font-family:'Liberation Sans',sans-serif;transform:scale(0.9417,1.0);transform-origin:0 5.93px;">CanWrite</div>
<div style="left:24px;top:347.20000000000005px;width:3.9px;height:3.8px;background:#34475b"></div>
<div style="left:15.5px;top:348.90000000000003px;width:6px;height:0px;border-top:1px solid #dcdcdc"></div>
<div class="t" style="left:31.9px;top:355.82px;font-size:7px;line-height:7px;color:#333;font-family:'Liberation Sans',sans-serif;transform:scale(0.9627,1.0);transform-origin:0 5.93px;">Deadband</div>
<div style="left:24px;top:357.75px;width:3.9px;height:3.8px;background:#34475b"></div>
<div style="left:15.5px;top:359.45px;width:6px;height:0px;border-top:1px solid #dcdcdc"></div>
<div class="t" style="left:31.9px;top:366.37px;font-size:7px;line-height:7px;color:#333;font-family:'Liberation Sans',sans-serif;transform:scale(0.9686,1.0);transform-origin:0 5.93px;">Documentation</div>
<div style="left:24px;top:368.3px;width:3.9px;height:3.8px;background:#34475b"></div>
<div style="left:15.5px;top:370.0px;width:6px;height:0px;border-top:1px solid #dcdcdc"></div>
<div class="t" style="left:31.9px;top:376.92px;font-size:7px;line-height:7px;color:#333;font-family:'Liberation Sans',sans-serif;transform:scale(0.9348,1.0);transform-origin:0 5.93px;">EngHigh</div>
<div style="left:24px;top:378.85px;width:3.9px;height:3.8px;background:#34475b"></div>
<div style="left:15.5px;top:380.55px;width:6px;height:0px;border-top:1px solid #dcdcdc"></div>
<div class="t" style="left:31.9px;top:387.47px;font-size:7px;line-height:7px;color:#333;font-family:'Liberation Sans',sans-serif;transform:scale(0.9132,1.0);transform-origin:0 5.93px;">EngLow</div>
<div style="left:24px;top:389.40000000000003px;width:3.9px;height:3.8px;background:#34475b"></div>
<div style="left:15.5px;top:391.1px;width:6px;height:0px;border-top:1px solid #dcdcdc"></div>
<div class="t" style="left:31.9px;top:398.02px;font-size:7px;line-height:7px;color:#333;font-family:'Liberation Sans',sans-serif;transform:scale(0.9477,1.0);transform-origin:0 5.93px;">EngUnit</div>
<div style="left:24px;top:399.95000000000005px;width:3.9px;height:3.8px;background:#34475b"></div>
<div style="left:15.5px;top:401.65000000000003px;width:6px;height:0px;border-top:1px solid #dcdcdc"></div>
<div class="t" style="left:31.9px;top:408.57px;font-size:7px;line-height:7px;color:#333;font-family:'Liberation Sans',sans-serif;transform:scale(0.9604,1.0);transform-origin:0 5.93px;">FormatString</div>
<div style="left:24px;top:410.5px;width:3.9px;height:3.8px;background:#34475b"></div>
<div style="left:15.5px;top:412.2px;width:6px;height:0px;border-top:1px solid #dcdcdc"></div>
<svg style="left:293.5px;top:324.5px;" width="7.5" height="6.5" viewBox="0 0 7.5 6.5"><rect x="0" y="0" width="7.5" height="6.5" rx="1" fill="#3b9ae0"/><path d="M1.6 3.3l1.6 1.6 3-3.2" stroke="#fff" stroke-width="1.1" fill="none"/></svg>
<svg style="left:293.5px;top:335px;" width="7.5" height="6.5" viewBox="0 0 7.5 6.5"><rect x="0" y="0" width="7.5" height="6.5" rx="1" fill="#3b9ae0"/><path d="M1.6 3.3l1.6 1.6 3-3.2" stroke="#fff" stroke-width="1.1" fill="none"/></svg>
<svg style="left:293.5px;top:345.5px;" width="7.5" height="6.5" viewBox="0 0 7.5 6.5"><rect x="0.5" y="0.5" width="6.5" height="5.5" rx="1" fill="#fff" stroke="#c8c8c8" stroke-width="0.8"/></svg>
<div class="t" style="left:297px;top:355.67px;font-size:7px;line-height:7px;color:#333;font-family:'Liberation Sans',sans-serif;transform:scale(1.0276,1.0);transform-origin:0 5.93px;">0</div>
<div class="t" style="left:289.75px;top:376.77px;font-size:7px;line-height:7px;color:#333;font-family:'Liberation Sans',sans-serif;transform:scale(0.9634,1.0);transform-origin:0 5.93px;">100</div>
<div class="t" style="left:297px;top:387.37px;font-size:7px;line-height:7px;color:#333;font-family:'Liberation Sans',sans-serif;transform:scale(1.0276,1.0);transform-origin:0 5.93px;">0</div>
<div class="t" style="left:273.5px;top:408.47px;font-size:7px;line-height:7px;color:#333;font-family:'Liberation Sans',sans-serif;transform:scale(0.9910,1.0);transform-origin:0 5.93px;">#,##0.##</div>
<div style="left:302.5px;top:233.5px;width:9px;height:182.5px;background:#fbfbfb;border-left:1px solid #ececec"></div>
<svg style="left:304.5px;top:239px;" width="5" height="3" viewBox="0 0 5 3"><path d="M0.5 2.5l2-2 2 2" fill="none" stroke="#555" stroke-width="0.8"/></svg>
<svg style="left:304.5px;top:411px;" width="5" height="3" viewBox="0 0 5 3"><path d="M0.5 0.5l2 2 2-2" fill="none" stroke="#555" stroke-width="0.8"/></svg>
<div style="left:303px;top:244px;width:6.8px;height:99px;background:#c9cdd2"></div>
<div style="left:305.3px;top:289px;width:2.2px;height:11px;border-left:0.6px solid #eee;border-right:0.6px solid #eee"></div>
<div style="left:311.5px;top:24px;width:4.5px;height:392px;background:#eceef0"></div>
<div style="left:312.5px;top:258px;width:2px;height:14px;background:#d8dbde"></div>
<div style="left:311.2px;top:24px;width:0.8px;height:392px;background:#d9dcdf"></div>
<div style="left:316px;top:24.4px;width:703.5px;height:10px;background:#d4e9f9"></div>
<div class="t" style="left:318.4px;top:27.87px;font-size:6.3px;line-height:6.3px;color:#333;font-family:'Liberation Sans',sans-serif;transform:scale(0.8992,1.0);transform-origin:0 5.33px;">Database Query Browser</div>
<svg style="left:991.5px;top:27px;" width="26" height="6" viewBox="0 0 26 6"><rect x="0.5" y="2" width="3.6" height="3.5" fill="none" stroke="#4a5868" stroke-width="0.9"/><rect x="0.5" y="2" width="3.6" height="1.2" fill="#4a5868"/><path d="M2.2 1.6v-1.1h3.4v3.4h-1.1" fill="none" stroke="#4a5868" stroke-width="0.8"/><path d="M10.2 4.8h4.2" stroke="#4a5868" stroke-width="1.1"/><path d="M19.7 0.6l4.8 4.8M24.5 0.6l-4.8 4.8" stroke="#4a5868" stroke-width="1.1"/></svg>
<div style="left:315.5px;top:34.4px;width:704px;height:295.5px;background:#f7f7f7;border-left:1px solid #dcdcdc;border-bottom:1px solid #d8d8d8"></div>
<div style="left:1019.5px;top:24px;width:4.5px;height:392px;background:#eceef0"></div>
<div style="left:1021px;top:24px;width:1px;height:392px;background:#dadcde"></div>
<div style="left:319.7px;top:37.9px;width:651px;height:43px;background:#fff;border:1px solid #cdd0d3"></div>
<div style="left:320.7px;top:38.8px;width:644px;height:9.4px;background:#fdfcd6"></div>
<div class="t" style="left:321px;top:42.66px;font-size:6.17px;line-height:6.17px;color:#222c86;font-weight:bold;-webkit-text-stroke:0;font-family:'Liberation Mono',monospace;transform:scale(0.9995,1.25);transform-origin:0 4.94px;">SELECT</div>
<div class="t" style="left:346.906862745098px;top:42.66px;font-size:6.17px;line-height:6.17px;color:#333;font-family:'Liberation Mono',monospace;transform:scale(0.9995,1.25);transform-origin:0 4.94px;">*</div>
<div class="t" style="left:354.30882352941177px;top:42.66px;font-size:6.17px;line-height:6.17px;color:#222c86;font-weight:bold;-webkit-text-stroke:0;font-family:'Liberation Mono',monospace;transform:scale(0.9995,1.25);transform-origin:0 4.94px;">FROM</div>
<div class="t" style="left:372.8137254901961px;top:42.66px;font-size:6.17px;line-height:6.17px;color:#3a3a3a;font-family:'Liberation Mono',monospace;transform:scale(0.9995,1.25);transform-origin:0 4.94px;">sqlt_data_1_2023_06</div>
<div class="t" style="left:446.83333333333337px;top:42.66px;font-size:6.17px;line-height:6.17px;color:#222c86;font-weight:bold;-webkit-text-stroke:0;font-family:'Liberation Mono',monospace;transform:scale(0.9995,1.25);transform-origin:0 4.94px;">where</div>
<div class="t" style="left:469.03921568627453px;top:42.66px;font-size:6.17px;line-height:6.17px;color:#3a3a3a;font-family:'Liberation Mono',monospace;transform:scale(0.9995,1.25);transform-origin:0 4.94px;">tagid = 424</div>
<div style="left:964.7px;top:38.8px;width:5.8px;height:36px;background:#fbfbfb;border-left:1px solid #ececec"></div>
<svg style="left:965.5px;top:41.5px;" width="4" height="2.5" viewBox="0 0 4 2.5"><path d="M0.5 2l1.5-1.5 1.5 1.5" fill="none" stroke="#555" stroke-width="0.7"/></svg>
<svg style="left:965.5px;top:69px;" width="4" height="2.5" viewBox="0 0 4 2.5"><path d="M0.5 0.5l1.5 1.5 1.5-1.5" fill="none" stroke="#555" stroke-width="0.7"/></svg>
<div style="left:320.7px;top:75px;width:650px;height:5.4px;background:#fbfbfb;border-top:1px solid #e6e6e6"></div>
<svg style="left:322px;top:76.3px;" width="2.5" height="3.5" viewBox="0 0 2.5 3.5"><path d="M2 0.3l-1.5 1.5 1.5 1.5" fill="none" stroke="#555" stroke-width="0.7"/></svg>
<svg style="left:958.5px;top:76.3px;" width="2.5" height="3.5" viewBox="0 0 2.5 3.5"><path d="M0.5 0.3l1.5 1.5-1.5 1.5" fill="none" stroke="#555" stroke-width="0.7"/></svg>
<div style="left:973.4px;top:38.8px;width:41.4px;height:30.2px;background:linear-gradient(#fbfbfc,#eef0f2);border:1px solid #d3d6d9;border-radius:1px"></div>
<svg style="left:991px;top:43.3px;" width="7.2" height="9.3" viewBox="0 0 7.2 9.3"><path d="M0 0l7.2 4.65-7.2 4.65z" fill="#3d5266"/></svg>
<div class="t" style="left:981.9px;top:57.54px;font-size:7.4px;line-height:7.4px;color:#444b52;font-family:'Liberation Sans',sans-serif;transform:scale(0.9201,1.0);transform-origin:0 6.26px;">Execute</div>
<svg style="left:321px;top:86.8px;" width="7.5" height="6.5" viewBox="0 0 7.5 6.5"><rect x="0" y="0" width="7.5" height="6.5" rx="1" fill="#3b9ae0"/><path d="M1.6 3.3l1.6 1.6 3-3.2" stroke="#fff" stroke-width="1.1" fill="none"/></svg>
<div class="t" style="left:330.8px;top:86.72px;font-size:7.3px;line-height:7.3px;color:#333;font-family:'Liberation Sans',sans-serif;transform:scale(0.8362,1.0);transform-origin:0 6.18px;">Limit SELECT to:</div>
<div style="left:380.9px;top:83.2px;width:26.4px;height:13.4px;background:#fff;border:1px solid #d7d9db;border-radius:1px"></div>
<div class="t" style="left:384.5px;top:86.72px;font-size:7.3px;line-height:7.3px;color:#333;font-family:'Liberation Sans',sans-serif;transform:scale(0.8807,1.0);transform-origin:0 6.18px;">1000</div>
<div class="t" style="left:409.8px;top:86.72px;font-size:7.3px;line-height:7.3px;color:#333;font-family:'Liberation Sans',sans-serif;transform:scale(0.9084,1.0);transform-origin:0 6.18px;">rows</div>
<svg style="left:649.8px;top:101.9px;" width="3.8" height="2.7" viewBox="0 0 3.8 2.7"><path d="M0.4 2.4l1.5-1.8 1.5 1.8" fill="none" stroke="#3d5064" stroke-width="1"/></svg>
<div style="left:661.1px;top:102.2px;width:12.6px;height:1.7px;background:#d3d6d9"></div>
<svg style="left:681.3px;top:101.9px;" width="3.7" height="2.2" viewBox="0 0 3.7 2.2"><path d="M0.4 0.4l1.45 1.5 1.45-1.5" fill="none" stroke="#3d5064" stroke-width="1"/></svg>
<div style="left:319.5px;top:106px;width:594px;height:222.5px;background:#fff;border:1px solid #d4d6d8"></div>
<div style="left:320.5px;top:107px;width:592px;height:12px;background:#d7dadd"></div>
<div style="left:322.9px;top:106.5px;width:51.8px;height:12.5px;background:#f6f7f8"></div>
<div style="left:322.9px;top:106.3px;width:51.8px;height:1.3px;background:#3b9ae0"></div>
<svg style="left:328.6px;top:110px;" width="4" height="6" viewBox="0 0 4 6"><path d="M3 0l-2.5 3.2h2l-1 2.8 3-3.5h-2z" fill="#33465a"/></svg>
<div class="t" style="left:336.9px;top:110.02px;font-size:7.3px;line-height:7.3px;color:#222;font-weight:bold;-webkit-text-stroke:0;font-family:'Liberation Sans',sans-serif;transform:scale(0.8782,1.0);transform-origin:0 6.18px;">Resultset 1</div>
<div style="left:320.5px;top:118.8px;width:592px;height:14px;background:linear-gradient(#ffffff,#f3f5f7);border-bottom:1px solid #dadcde"></div>
<div style="left:372.4px;top:119.5px;width:0.8px;height:13px;background:#dfe2e5"></div>
<div style="left:425.5px;top:119.5px;width:0.8px;height:13px;background:#dfe2e5"></div>
<div style="left:478.6px;top:119.5px;width:0.8px;height:13px;background:#dfe2e5"></div>
<div style="left:583.75px;top:119.5px;width:0.8px;height:13px;background:#dfe2e5"></div>
<div style="left:662.8px;top:119.5px;width:0.8px;height:13px;background:#dfe2e5"></div>
<div style="left:715.6px;top:119.5px;width:0.8px;height:13px;background:#dfe2e5"></div>
<div style="left:768.3px;top:119.5px;width:0.8px;height:13px;background:#dfe2e5"></div>
<div class="t" style="left:325.5px;top:122.65px;font-size:7.5px;line-height:7.5px;color:#222;font-weight:bold;-webkit-text-stroke:0;font-family:'Liberation Sans',sans-serif;transform:scale(0.9323,1.0);transform-origin:0 6.35px;">tagid</div>
<div class="t" style="left:378.2px;top:122.65px;font-size:7.5px;line-height:7.5px;color:#222;font-weight:bold;-webkit-text-stroke:0;font-family:'Liberation Sans',sans-serif;transform:scale(0.9351,1.0);transform-origin:0 6.35px;">intvalue</div>
<div class="t" style="left:430.8px;top:122.65px;font-size:7.5px;line-height:7.5px;color:#222;font-weight:bold;-webkit-text-stroke:0;font-family:'Liberation Sans',sans-serif;transform:scale(0.9198,1.0);transform-origin:0 6.35px;">floatvalue</div>
<div class="t" style="left:483.75px;top:122.65px;font-size:7.5px;line-height:7.5px;color:#222;font-weight:bold;-webkit-text-stroke:0;font-family:'Liberation Sans',sans-serif;transform:scale(0.9135,1.0);transform-origin:0 6.35px;">stringvalue</div>
<div class="t" style="left:589px;top:122.65px;font-size:7.5px;line-height:7.5px;color:#222;font-weight:bold;-webkit-text-stroke:0;font-family:'Liberation Sans',sans-serif;transform:scale(0.9322,1.0);transform-origin:0 6.35px;">datevalue</div>
<div class="t" style="left:668.75px;top:122.65px;font-size:7.5px;line-height:7.5px;color:#222;font-weight:bold;-webkit-text-stroke:0;font-family:'Liberation Sans',sans-serif;transform:scale(0.9166,1.0);transform-origin:0 6.35px;">dataintegrity</div>
<div class="t" style="left:721.4px;top:122.65px;font-size:7.5px;line-height:7.5px;color:#222;font-weight:bold;-webkit-text-stroke:0;font-family:'Liberation Sans',sans-serif;transform:scale(0.8555,1.0);transform-origin:0 6.35px;">t_stamp</div>
<div style="left:320.5px;top:134px;width:447.8px;height:8.3px;background:#eeeeee"></div>
<div style="left:320.5px;top:152.3px;width:447.8px;height:8.3px;background:#eeeeee"></div>
<div style="left:372.4px;top:134px;width:0.6px;height:26.6px;background:#ececec"></div>
<div style="left:425.5px;top:134px;width:0.6px;height:26.6px;background:#ececec"></div>
<div style="left:478.6px;top:134px;width:0.6px;height:26.6px;background:#ececec"></div>
<div style="left:583.75px;top:134px;width:0.6px;height:26.6px;background:#ececec"></div>
<div style="left:662.8px;top:134px;width:0.6px;height:26.6px;background:#ececec"></div>
<div style="left:715.6px;top:134px;width:0.6px;height:26.6px;background:#ececec"></div>
<div class="t" style="left:355.8px;top:134.02px;font-size:7.3px;line-height:7.3px;color:#333;font-family:'Liberation Sans',sans-serif;transform:scale(0.9361,1.0);transform-origin:0 6.18px;">424</div>
<div style="left:408.2px;top:135.8px;width:11.7px;height:4.3px;background:#6e6e6e;border-radius:0.6px"></div>
<svg style="left:410.2px;top:136.70000000000002px;" width="8" height="2.6" viewBox="0 0 8 2.6"><path d="M0.3 2.6v-2.3l1.6 2.3v-2.3M2.7 0.3v1.6a0.8 0.7 0 0 0 1.6 0v-1.6M5 0.3v2.2h1.2M6.6 0.3v2.2h1.3" fill="none" stroke="#d8d8d8" stroke-width="0.6"/></svg>
<div style="left:461px;top:135.8px;width:11.7px;height:4.3px;background:#6e6e6e;border-radius:0.6px"></div>
<svg style="left:463px;top:136.70000000000002px;" width="8" height="2.6" viewBox="0 0 8 2.6"><path d="M0.3 2.6v-2.3l1.6 2.3v-2.3M2.7 0.3v1.6a0.8 0.7 0 0 0 1.6 0v-1.6M5 0.3v2.2h1.2M6.6 0.3v2.2h1.3" fill="none" stroke="#d8d8d8" stroke-width="0.6"/></svg>
<div style="left:589px;top:135.8px;width:11.7px;height:4.3px;background:#6e6e6e;border-radius:0.6px"></div>
<svg style="left:591px;top:136.70000000000002px;" width="8" height="2.6" viewBox="0 0 8 2.6"><path d="M0.3 2.6v-2.3l1.6 2.3v-2.3M2.7 0.3v1.6a0.8 0.7 0 0 0 1.6 0v-1.6M5 0.3v2.2h1.2M6.6 0.3v2.2h1.3" fill="none" stroke="#d8d8d8" stroke-width="0.6"/></svg>
<div class="t" style="left:483.75px;top:134.02px;font-size:7.3px;line-height:7.3px;color:#333;font-family:'Liberation Sans',sans-serif;transform:scale(0.8930,1.0);transform-origin:0 6.18px;">12</div>
<div class="t" style="left:699.5px;top:134.02px;font-size:7.3px;line-height:7.3px;color:#333;font-family:'Liberation Sans',sans-serif;transform:scale(0.8622,1.0);transform-origin:0 6.18px;">192</div>
<div class="t" style="left:721.4px;top:134.02px;font-size:7.3px;line-height:7.3px;color:#333;font-family:'Liberation Sans',sans-serif;transform:scale(0.8869,1.0);transform-origin:0 6.18px;">1686751037...</div>
<div class="t" style="left:355.8px;top:143.42px;font-size:7.3px;line-height:7.3px;color:#333;font-family:'Liberation Sans',sans-serif;transform:scale(0.9361,1.0);transform-origin:0 6.18px;">424</div>
<div style="left:408.2px;top:145.20000000000002px;width:11.7px;height:4.3px;background:#6e6e6e;border-radius:0.6px"></div>
<svg style="left:410.2px;top:146.10000000000002px;" width="8" height="2.6" viewBox="0 0 8 2.6"><path d="M0.3 2.6v-2.3l1.6 2.3v-2.3M2.7 0.3v1.6a0.8 0.7 0 0 0 1.6 0v-1.6M5 0.3v2.2h1.2M6.6 0.3v2.2h1.3" fill="none" stroke="#d8d8d8" stroke-width="0.6"/></svg>
<div style="left:461px;top:145.20000000000002px;width:11.7px;height:4.3px;background:#6e6e6e;border-radius:0.6px"></div>
<svg style="left:463px;top:146.10000000000002px;" width="8" height="2.6" viewBox="0 0 8 2.6"><path d="M0.3 2.6v-2.3l1.6 2.3v-2.3M2.7 0.3v1.6a0.8 0.7 0 0 0 1.6 0v-1.6M5 0.3v2.2h1.2M6.6 0.3v2.2h1.3" fill="none" stroke="#d8d8d8" stroke-width="0.6"/></svg>
<div style="left:589px;top:145.20000000000002px;width:11.7px;height:4.3px;background:#6e6e6e;border-radius:0.6px"></div>
<svg style="left:591px;top:146.10000000000002px;" width="8" height="2.6" viewBox="0 0 8 2.6"><path d="M0.3 2.6v-2.3l1.6 2.3v-2.3M2.7 0.3v1.6a0.8 0.7 0 0 0 1.6 0v-1.6M5 0.3v2.2h1.2M6.6 0.3v2.2h1.3" fill="none" stroke="#d8d8d8" stroke-width="0.6"/></svg>
<div class="t" style="left:483.75px;top:143.42px;font-size:7.3px;line-height:7.3px;color:#333;font-family:'Liberation Sans',sans-serif;transform:scale(0.9238,1.0);transform-origin:0 6.18px;">9</div>
<div class="t" style="left:699.5px;top:143.42px;font-size:7.3px;line-height:7.3px;color:#333;font-family:'Liberation Sans',sans-serif;transform:scale(0.8622,1.0);transform-origin:0 6.18px;">192</div>
<div class="t" style="left:721.4px;top:143.42px;font-size:7.3px;line-height:7.3px;color:#333;font-family:'Liberation Sans',sans-serif;transform:scale(0.8869,1.0);transform-origin:0 6.18px;">1686751075...</div>
<div class="t" style="left:355.8px;top:152.82px;font-size:7.3px;line-height:7.3px;color:#333;font-family:'Liberation Sans',sans-serif;transform:scale(0.9361,1.0);transform-origin:0 6.18px;">424</div>
<div style="left:408.2px;top:154.60000000000002px;width:11.7px;height:4.3px;background:#6e6e6e;border-radius:0.6px"></div>
<svg style="left:410.2px;top:155.50000000000003px;" width="8" height="2.6" viewBox="0 0 8 2.6"><path d="M0.3 2.6v-2.3l1.6 2.3v-2.3M2.7 0.3v1.6a0.8 0.7 0 0 0 1.6 0v-1.6M5 0.3v2.2h1.2M6.6 0.3v2.2h1.3" fill="none" stroke="#d8d8d8" stroke-width="0.6"/></svg>
<div style="left:461px;top:154.60000000000002px;width:11.7px;height:4.3px;background:#6e6e6e;border-radius:0.6px"></div>
<svg style="left:463px;top:155.50000000000003px;" width="8" height="2.6" viewBox="0 0 8 2.6"><path d="M0.3 2.6v-2.3l1.6 2.3v-2.3M2.7 0.3v1.6a0.8 0.7 0 0 0 1.6 0v-1.6M5 0.3v2.2h1.2M6.6 0.3v2.2h1.3" fill="none" stroke="#d8d8d8" stroke-width="0.6"/></svg>
<div style="left:589px;top:154.60000000000002px;width:11.7px;height:4.3px;background:#6e6e6e;border-radius:0.6px"></div>
<svg style="left:591px;top:155.50000000000003px;" width="8" height="2.6" viewBox="0 0 8 2.6"><path d="M0.3 2.6v-2.3l1.6 2.3v-2.3M2.7 0.3v1.6a0.8 0.7 0 0 0 1.6 0v-1.6M5 0.3v2.2h1.2M6.6 0.3v2.2h1.3" fill="none" stroke="#d8d8d8" stroke-width="0.6"/></svg>
<div class="t" style="left:483.75px;top:152.82px;font-size:7.3px;line-height:7.3px;color:#333;font-family:'Liberation Sans',sans-serif;transform:scale(0.8930,1.0);transform-origin:0 6.18px;">15</div>
<div class="t" style="left:699.5px;top:152.82px;font-size:7.3px;line-height:7.3px;color:#333;font-family:'Liberation Sans',sans-serif;transform:scale(0.8622,1.0);transform-origin:0 6.18px;">192</div>
<div class="t" style="left:721.4px;top:152.82px;font-size:7.3px;line-height:7.3px;color:#333;font-family:'Liberation Sans',sans-serif;transform:scale(0.8869,1.0);transform-origin:0 6.18px;">1686752359...</div>
<div style="left:320.5px;top:314.2px;width:592px;height:13.5px;background:#f8f8f8;border-top:1px solid #dadcde"></div>
<div class="t" style="left:321.9px;top:317.52px;font-size:7.3px;line-height:7.3px;color:#333;font-family:'Liberation Sans',sans-serif;transform:scale(0.8986,1.0);transform-origin:0 6.18px;">3 rows fetched in 0.022s</div>
<div style="left:761.4px;top:315px;width:54.5px;height:12.2px;background:#cdd1d5"></div>
<svg style="left:765px;top:317.8px;" width="6" height="6" viewBox="0 0 6 6"><path d="M5.5 2.2a2.7 2.7 0 0 0-5-0.4M0.5 3.8a2.7 2.7 0 0 0 5 0.4" fill="none" stroke="#47596b" stroke-width="1"/><path d="M4.6 0.2v2h1.5M1.4 5.8v-2h-1.5" fill="none" stroke="#47596b" stroke-width="0.8"/></svg>
<div class="t" style="left:772.5px;top:318.15px;font-size:7.5px;line-height:7.5px;color:#4a5a6a;font-weight:bold;-webkit-text-stroke:0;font-family:'Liberation Sans',sans-serif;transform:scale(0.8474,1.0);transform-origin:0 6.35px;">Auto Refresh</div>
<div style="left:816px;top:315px;width:96.5px;height:12.2px;background:#ededed"></div>
<div style="left:842.2px;top:315px;width:0.8px;height:12.2px;background:#e0e0e0"></div>
<div style="left:875.1px;top:315px;width:0.8px;height:12.2px;background:#e0e0e0"></div>
<svg style="left:819.5px;top:318px;" width="6" height="6" viewBox="0 0 6 6"><path d="M0.5 5.5l5-5" stroke="#b8c0c8" stroke-width="1.2"/></svg>
<div class="t" style="left:827.3px;top:318.15px;font-size:7.5px;line-height:7.5px;color:#b4bcc4;font-weight:bold;-webkit-text-stroke:0;font-family:'Liberation Sans',sans-serif;transform:scale(0.8684,1.0);transform-origin:0 6.35px;">Edit</div>
<svg style="left:845.5px;top:318.5px;" width="7" height="5" viewBox="0 0 7 5"><path d="M0.5 2.5l2 2 4-4" stroke="#aab3bc" stroke-width="1.3" fill="none"/></svg>
<div class="t" style="left:853.7px;top:318.15px;font-size:7.5px;line-height:7.5px;color:#b4bcc4;font-weight:bold;-webkit-text-stroke:0;font-family:'Liberation Sans',sans-serif;transform:scale(0.8832,1.0);transform-origin:0 6.35px;">Apply</div>
<svg style="left:879px;top:317.5px;" width="4" height="7" viewBox="0 0 4 7"><rect x="0.5" y="1.5" width="3" height="5" fill="none" stroke="#b8c0c8" stroke-width="0.8"/><path d="M0 1h4" stroke="#b8c0c8" stroke-width="0.8"/></svg>
<div class="t" style="left:886.7px;top:318.15px;font-size:7.5px;line-height:7.5px;color:#b4bcc4;font-weight:bold;-webkit-text-stroke:0;font-family:'Liberation Sans',sans-serif;transform:scale(0.8469,1.0);transform-origin:0 6.35px;">Discard</div>
<svg style="left:916.8px;top:199.5px;" width="3" height="4" viewBox="0 0 3 4"><path d="M2.5 0.3l-2 1.7 2 1.7" fill="none" stroke="#555" stroke-width="0.7"/></svg>
<svg style="left:916.8px;top:231px;" width="3" height="4" viewBox="0 0 3 4"><path d="M0.5 0.3l2 1.7-2 1.7" fill="none" stroke="#555" stroke-width="0.7"/></svg>
<div style="left:917.5px;top:211px;width:1.5px;height:16px;background:#d3d6d9"></div>
<div style="left:922px;top:106.5px;width:82.6px;height:12.7px;background:#fff;border:1px solid #d4d7da;border-radius:1px"></div>
<div class="t" style="left:924.9px;top:110.22px;font-size:7.3px;line-height:7.3px;color:#333;font-family:'Liberation Sans',sans-serif;transform:scale(0.8710,1.0);transform-origin:0 6.18px;">ArcLive</div>
<svg style="left:999px;top:111.5px;" width="4" height="2.5" viewBox="0 0 4 2.5"><path d="M0 0h4l-2 2.5z" fill="#2f4256"/></svg>
<svg style="left:1008.2px;top:110px;" width="6.5" height="6" viewBox="0 0 6.5 6"><path d="M6 2.2a2.8 2.8 0 0 0-5.2-0.5M0.5 3.8a2.8 2.8 0 0 0 5.2 0.5" fill="none" stroke="#3d5064" stroke-width="1"/><path d="M5 0.2v2h1.5M1.5 5.8v-2h-1.5" fill="none" stroke="#3d5064" stroke-width="0.8"/></svg>
<div style="left:922px;top:122.4px;width:93.8px;height:205.2px;background:#f0f1f2;border:1px solid #d8dbde"></div>
<div style="left:923px;top:123.4px;width:91.8px;height:11.2px;background:#d6d9dc"></div>
<div style="left:926px;top:123.4px;width:30.7px;height:11.5px;background:#f7f8f9"></div>
<div style="left:926px;top:122.8px;width:30.7px;height:1.3px;background:#3b9ae0"></div>
<div class="t" style="left:929.2px;top:126.15px;font-size:7.5px;line-height:7.5px;color:#222;font-weight:bold;-webkit-text-stroke:0;font-family:'Liberation Sans',sans-serif;transform:scale(0.8552,1.0);transform-origin:0 6.35px;">Schema</div>
<div class="t" style="left:959.5px;top:126.15px;font-size:7.5px;line-height:7.5px;color:#222;font-weight:bold;-webkit-text-stroke:0;font-family:'Liberation Sans',sans-serif;transform:scale(0.8785,1.0);transform-origin:0 6.35px;">History</div>
<div style="left:923px;top:136px;width:91.7px;height:190.5px;background:#fff;border:1px solid #d4d7da"></div>
<div style="left:923.8px;top:200.4px;width:83.4px;height:10.2px;background:#48a3e1"></div>
<div class="t" style="left:943.2px;top:138.91px;font-size:7.2px;line-height:7.2px;color:#333;font-family:'Liberation Sans',sans-serif;transform:scale(0.8307,1.0);transform-origin:0 6.09px;">AUDIT_EVENTS</div>
<svg style="left:925.6px;top:140.6px;" width="3" height="5" viewBox="0 0 3 5"><path d="M0 0v5l3-2.5z" fill="#5b7ca3"/></svg>
<div style="left:929.3px;top:142.7px;width:3.7px;height:0px;border-top:1px solid #e2e2e2"></div>
<svg style="left:933.9px;top:139.4px;" width="5.8" height="6.2" viewBox="0 0 5.8 6.2"><rect x="0.45" y="0.45" width="4.9" height="5.3" fill="none" stroke="#3d5064" stroke-width="0.8"/><path d="M0.45 1h4.9" stroke="#3d5064" stroke-width="0.9"/><path d="M2.1 1v4.7M3.7 1v4.7" stroke="#3d5064" stroke-width="0.55"/></svg>
<div class="t" style="left:943.2px;top:149.44px;font-size:7.2px;line-height:7.2px;color:#333;font-family:'Liberation Sans',sans-serif;transform:scale(0.9257,1.0);transform-origin:0 6.09px;">ReportAI</div>
<svg style="left:925.6px;top:151.13px;" width="3" height="5" viewBox="0 0 3 5"><path d="M0 0v5l3-2.5z" fill="#5b7ca3"/></svg>
<div style="left:929.3px;top:153.23px;width:3.7px;height:0px;border-top:1px solid #e2e2e2"></div>
<svg style="left:933.9px;top:149.93px;" width="5.8" height="6.2" viewBox="0 0 5.8 6.2"><rect x="0.45" y="0.45" width="4.9" height="5.3" fill="none" stroke="#3d5064" stroke-width="0.8"/><path d="M0.45 1h4.9" stroke="#3d5064" stroke-width="0.9"/><path d="M2.1 1v4.7M3.7 1v4.7" stroke="#3d5064" stroke-width="0.55"/></svg>
<div class="t" style="left:943.2px;top:159.97px;font-size:7.2px;line-height:7.2px;color:#333;font-family:'Liberation Sans',sans-serif;transform:scale(0.8120,1.0);transform-origin:0 6.09px;">alarm_event_data</div>
<svg style="left:925.6px;top:161.66px;" width="3" height="5" viewBox="0 0 3 5"><path d="M0 0v5l3-2.5z" fill="#5b7ca3"/></svg>
<div style="left:929.3px;top:163.76px;width:3.7px;height:0px;border-top:1px solid #e2e2e2"></div>
<svg style="left:933.9px;top:160.46px;" width="5.8" height="6.2" viewBox="0 0 5.8 6.2"><rect x="0.45" y="0.45" width="4.9" height="5.3" fill="none" stroke="#3d5064" stroke-width="0.8"/><path d="M0.45 1h4.9" stroke="#3d5064" stroke-width="0.9"/><path d="M2.1 1v4.7M3.7 1v4.7" stroke="#3d5064" stroke-width="0.55"/></svg>
<div class="t" style="left:943.2px;top:170.50px;font-size:7.2px;line-height:7.2px;color:#333;font-family:'Liberation Sans',sans-serif;transform:scale(0.8515,1.0);transform-origin:0 6.09px;">alarm_events</div>
<svg style="left:925.6px;top:172.19px;" width="3" height="5" viewBox="0 0 3 5"><path d="M0 0v5l3-2.5z" fill="#5b7ca3"/></svg>
<div style="left:929.3px;top:174.29px;width:3.7px;height:0px;border-top:1px solid #e2e2e2"></div>
<svg style="left:933.9px;top:170.99px;" width="5.8" height="6.2" viewBox="0 0 5.8 6.2"><rect x="0.45" y="0.45" width="4.9" height="5.3" fill="none" stroke="#3d5064" stroke-width="0.8"/><path d="M0.45 1h4.9" stroke="#3d5064" stroke-width="0.9"/><path d="M2.1 1v4.7M3.7 1v4.7" stroke="#3d5064" stroke-width="0.55"/></svg>
<div class="t" style="left:943.2px;top:181.03px;font-size:7.2px;line-height:7.2px;color:#333;font-family:'Liberation Sans',sans-serif;transform:scale(0.8534,1.0);transform-origin:0 6.09px;">propertyListing</div>
<svg style="left:925.6px;top:182.72px;" width="3" height="5" viewBox="0 0 3 5"><path d="M0 0v5l3-2.5z" fill="#5b7ca3"/></svg>
<div style="left:929.3px;top:184.82px;width:3.7px;height:0px;border-top:1px solid #e2e2e2"></div>
<svg style="left:933.9px;top:181.52px;" width="5.8" height="6.2" viewBox="0 0 5.8 6.2"><rect x="0.45" y="0.45" width="4.9" height="5.3" fill="none" stroke="#3d5064" stroke-width="0.8"/><path d="M0.45 1h4.9" stroke="#3d5064" stroke-width="0.9"/><path d="M2.1 1v4.7M3.7 1v4.7" stroke="#3d5064" stroke-width="0.55"/></svg>
<div class="t" style="left:943.2px;top:191.56px;font-size:7.2px;line-height:7.2px;color:#333;font-family:'Liberation Sans',sans-serif;transform:scale(0.9103,1.0);transform-origin:0 6.09px;">propertyRooms</div>
<svg style="left:925.6px;top:193.25px;" width="3" height="5" viewBox="0 0 3 5"><path d="M0 0v5l3-2.5z" fill="#5b7ca3"/></svg>
<div style="left:929.3px;top:195.35px;width:3.7px;height:0px;border-top:1px solid #e2e2e2"></div>
<svg style="left:933.9px;top:192.05px;" width="5.8" height="6.2" viewBox="0 0 5.8 6.2"><rect x="0.45" y="0.45" width="4.9" height="5.3" fill="none" stroke="#3d5064" stroke-width="0.8"/><path d="M0.45 1h4.9" stroke="#3d5064" stroke-width="0.9"/><path d="M2.1 1v4.7M3.7 1v4.7" stroke="#3d5064" stroke-width="0.55"/></svg>
<div class="t" style="left:943.2px;top:202.09px;font-size:7.2px;line-height:7.2px;color:#fff;font-family:'Liberation Sans',sans-serif;transform:scale(0.9634,1.0);transform-origin:0 6.09px;">reportHistory</div>
<svg style="left:925.6px;top:203.78px;" width="3" height="5" viewBox="0 0 3 5"><path d="M0 0v5l3-2.5z" fill="#fff"/></svg>
<div style="left:929.3px;top:205.88px;width:3.7px;height:0px;border-top:1px solid #bfe0f6"></div>
<svg style="left:933.9px;top:202.58px;" width="5.8" height="6.2" viewBox="0 0 5.8 6.2"><rect x="0.45" y="0.45" width="4.9" height="5.3" fill="none" stroke="#4e6378" stroke-width="0.8"/><path d="M0.45 1h4.9" stroke="#4e6378" stroke-width="0.9"/><path d="M2.1 1v4.7M3.7 1v4.7" stroke="#4e6378" stroke-width="0.55"/></svg>
<div class="t" style="left:943.2px;top:212.62px;font-size:7.2px;line-height:7.2px;color:#333;font-family:'Liberation Sans',sans-serif;transform:scale(0.9399,1.0);transform-origin:0 6.09px;">rooms</div>
<svg style="left:925.6px;top:214.30999999999997px;" width="3" height="5" viewBox="0 0 3 5"><path d="M0 0v5l3-2.5z" fill="#5b7ca3"/></svg>
<div style="left:929.3px;top:216.40999999999997px;width:3.7px;height:0px;border-top:1px solid #e2e2e2"></div>
<svg style="left:933.9px;top:213.10999999999999px;" width="5.8" height="6.2" viewBox="0 0 5.8 6.2"><rect x="0.45" y="0.45" width="4.9" height="5.3" fill="none" stroke="#3d5064" stroke-width="0.8"/><path d="M0.45 1h4.9" stroke="#3d5064" stroke-width="0.9"/><path d="M2.1 1v4.7M3.7 1v4.7" stroke="#3d5064" stroke-width="0.55"/></svg>
<div class="t" style="left:943.2px;top:223.15px;font-size:7.2px;line-height:7.2px;color:#333;font-family:'Liberation Sans',sans-serif;transform:scale(0.8634,1.0);transform-origin:0 6.09px;">sqlt_data_1_2023_02</div>
<svg style="left:925.6px;top:224.84px;" width="3" height="5" viewBox="0 0 3 5"><path d="M0 0v5l3-2.5z" fill="#5b7ca3"/></svg>
<div style="left:929.3px;top:226.94px;width:3.7px;height:0px;border-top:1px solid #e2e2e2"></div>
<svg style="left:933.9px;top:223.64000000000001px;" width="5.8" height="6.2" viewBox="0 0 5.8 6.2"><rect x="0.45" y="0.45" width="4.9" height="5.3" fill="none" stroke="#3d5064" stroke-width="0.8"/><path d="M0.45 1h4.9" stroke="#3d5064" stroke-width="0.9"/><path d="M2.1 1v4.7M3.7 1v4.7" stroke="#3d5064" stroke-width="0.55"/></svg>
<div class="t" style="left:943.2px;top:233.68px;font-size:7.2px;line-height:7.2px;color:#333;font-family:'Liberation Sans',sans-serif;transform:scale(0.8634,1.0);transform-origin:0 6.09px;">sqlt_data_1_2023_03</div>
<svg style="left:925.6px;top:235.36999999999998px;" width="3" height="5" viewBox="0 0 3 5"><path d="M0 0v5l3-2.5z" fill="#5b7ca3"/></svg>
<div style="left:929.3px;top:237.46999999999997px;width:3.7px;height:0px;border-top:1px solid #e2e2e2"></div>
<svg style="left:933.9px;top:234.17px;" width="5.8" height="6.2" viewBox="0 0 5.8 6.2"><rect x="0.45" y="0.45" width="4.9" height="5.3" fill="none" stroke="#3d5064" stroke-width="0.8"/><path d="M0.45 1h4.9" stroke="#3d5064" stroke-width="0.9"/><path d="M2.1 1v4.7M3.7 1v4.7" stroke="#3d5064" stroke-width="0.55"/></svg>
<div class="t" style="left:943.2px;top:244.21px;font-size:7.2px;line-height:7.2px;color:#333;font-family:'Liberation Sans',sans-serif;transform:scale(0.8634,1.0);transform-origin:0 6.09px;">sqlt_data_1_2023_04</div>
<svg style="left:925.6px;top:245.9px;" width="3" height="5" viewBox="0 0 3 5"><path d="M0 0v5l3-2.5z" fill="#5b7ca3"/></svg>
<div style="left:929.3px;top:248.0px;width:3.7px;height:0px;border-top:1px solid #e2e2e2"></div>
<svg style="left:933.9px;top:244.70000000000002px;" width="5.8" height="6.2" viewBox="0 0 5.8 6.2"><rect x="0.45" y="0.45" width="4.9" height="5.3" fill="none" stroke="#3d5064" stroke-width="0.8"/><path d="M0.45 1h4.9" stroke="#3d5064" stroke-width="0.9"/><path d="M2.1 1v4.7M3.7 1v4.7" stroke="#3d5064" stroke-width="0.55"/></svg>
<div class="t" style="left:943.2px;top:254.74px;font-size:7.2px;line-height:7.2px;color:#333;font-family:'Liberation Sans',sans-serif;transform:scale(0.8634,1.0);transform-origin:0 6.09px;">sqlt_data_1_2023_05</div>
<svg style="left:925.6px;top:256.43px;" width="3" height="5" viewBox="0 0 3 5"><path d="M0 0v5l3-2.5z" fill="#5b7ca3"/></svg>
<div style="left:929.3px;top:258.53px;width:3.7px;height:0px;border-top:1px solid #e2e2e2"></div>
<svg style="left:933.9px;top:255.23px;" width="5.8" height="6.2" viewBox="0 0 5.8 6.2"><rect x="0.45" y="0.45" width="4.9" height="5.3" fill="none" stroke="#3d5064" stroke-width="0.8"/><path d="M0.45 1h4.9" stroke="#3d5064" stroke-width="0.9"/><path d="M2.1 1v4.7M3.7 1v4.7" stroke="#3d5064" stroke-width="0.55"/></svg>
<div class="t" style="left:943.2px;top:265.27px;font-size:7.2px;line-height:7.2px;color:#333;font-family:'Liberation Sans',sans-serif;transform:scale(0.8634,1.0);transform-origin:0 6.09px;">sqlt_data_1_2023_06</div>
<svg style="left:925.6px;top:266.96000000000004px;" width="3" height="5" viewBox="0 0 3 5"><path d="M0 0v5l3-2.5z" fill="#5b7ca3"/></svg>
<div style="left:929.3px;top:269.06px;width:3.7px;height:0px;border-top:1px solid #e2e2e2"></div>
<svg style="left:933.9px;top:265.76px;" width="5.8" height="6.2" viewBox="0 0 5.8 6.2"><rect x="0.45" y="0.45" width="4.9" height="5.3" fill="none" stroke="#3d5064" stroke-width="0.8"/><path d="M0.45 1h4.9" stroke="#3d5064" stroke-width="0.9"/><path d="M2.1 1v4.7M3.7 1v4.7" stroke="#3d5064" stroke-width="0.55"/></svg>
<div class="t" style="left:943.2px;top:275.80px;font-size:7.2px;line-height:7.2px;color:#333;font-family:'Liberation Sans',sans-serif;transform:scale(0.9089,1.0);transform-origin:0 6.09px;">sqlth_annotations</div>
<svg style="left:925.6px;top:277.49px;" width="3" height="5" viewBox="0 0 3 5"><path d="M0 0v5l3-2.5z" fill="#5b7ca3"/></svg>
<div style="left:929.3px;top:279.59px;width:3.7px;height:0px;border-top:1px solid #e2e2e2"></div>
<svg style="left:933.9px;top:276.28999999999996px;" width="5.8" height="6.2" viewBox="0 0 5.8 6.2"><rect x="0.45" y="0.45" width="4.9" height="5.3" fill="none" stroke="#3d5064" stroke-width="0.8"/><path d="M0.45 1h4.9" stroke="#3d5064" stroke-width="0.9"/><path d="M2.1 1v4.7M3.7 1v4.7" stroke="#3d5064" stroke-width="0.55"/></svg>
<div class="t" style="left:943.2px;top:286.33px;font-size:7.2px;line-height:7.2px;color:#333;font-family:'Liberation Sans',sans-serif;transform:scale(0.9345,1.0);transform-origin:0 6.09px;">sqlth_drv</div>
<svg style="left:925.6px;top:288.02px;" width="3" height="5" viewBox="0 0 3 5"><path d="M0 0v5l3-2.5z" fill="#5b7ca3"/></svg>
<div style="left:929.3px;top:290.11999999999995px;width:3.7px;height:0px;border-top:1px solid #e2e2e2"></div>
<svg style="left:933.9px;top:286.81999999999994px;" width="5.8" height="6.2" viewBox="0 0 5.8 6.2"><rect x="0.45" y="0.45" width="4.9" height="5.3" fill="none" stroke="#3d5064" stroke-width="0.8"/><path d="M0.45 1h4.9" stroke="#3d5064" stroke-width="0.9"/><path d="M2.1 1v4.7M3.7 1v4.7" stroke="#3d5064" stroke-width="0.55"/></svg>
<div class="t" style="left:943.2px;top:296.86px;font-size:7.2px;line-height:7.2px;color:#333;font-family:'Liberation Sans',sans-serif;transform:scale(0.9252,1.0);transform-origin:0 6.09px;">sqlth_partitions</div>
<svg style="left:925.6px;top:298.55px;" width="3" height="5" viewBox="0 0 3 5"><path d="M0 0v5l3-2.5z" fill="#5b7ca3"/></svg>
<div style="left:929.3px;top:300.65px;width:3.7px;height:0px;border-top:1px solid #e2e2e2"></div>
<svg style="left:933.9px;top:297.34999999999997px;" width="5.8" height="6.2" viewBox="0 0 5.8 6.2"><rect x="0.45" y="0.45" width="4.9" height="5.3" fill="none" stroke="#3d5064" stroke-width="0.8"/><path d="M0.45 1h4.9" stroke="#3d5064" stroke-width="0.9"/><path d="M2.1 1v4.7M3.7 1v4.7" stroke="#3d5064" stroke-width="0.55"/></svg>
<div class="t" style="left:943.2px;top:307.39px;font-size:7.2px;line-height:7.2px;color:#333;font-family:'Liberation Sans',sans-serif;transform:scale(0.8976,1.0);transform-origin:0 6.09px;">sqlth_sce</div>
<svg style="left:925.6px;top:309.08000000000004px;" width="3" height="5" viewBox="0 0 3 5"><path d="M0 0v5l3-2.5z" fill="#5b7ca3"/></svg>
<div style="left:929.3px;top:311.18px;width:3.7px;height:0px;border-top:1px solid #e2e2e2"></div>
<svg style="left:933.9px;top:307.88px;" width="5.8" height="6.2" viewBox="0 0 5.8 6.2"><rect x="0.45" y="0.45" width="4.9" height="5.3" fill="none" stroke="#3d5064" stroke-width="0.8"/><path d="M0.45 1h4.9" stroke="#3d5064" stroke-width="0.9"/><path d="M2.1 1v4.7M3.7 1v4.7" stroke="#3d5064" stroke-width="0.55"/></svg>
<div class="t" style="left:943.2px;top:317.92px;font-size:7.2px;line-height:7.2px;color:#333;font-family:'Liberation Sans',sans-serif;transform:scale(0.8890,1.0);transform-origin:0 6.09px;">sqlth_scinfo</div>
<svg style="left:925.6px;top:319.61px;" width="3" height="5" viewBox="0 0 3 5"><path d="M0 0v5l3-2.5z" fill="#5b7ca3"/></svg>
<div style="left:929.3px;top:321.71px;width:3.7px;height:0px;border-top:1px solid #e2e2e2"></div>
<svg style="left:933.9px;top:318.40999999999997px;" width="5.8" height="6.2" viewBox="0 0 5.8 6.2"><rect x="0.45" y="0.45" width="4.9" height="5.3" fill="none" stroke="#3d5064" stroke-width="0.8"/><path d="M0.45 1h4.9" stroke="#3d5064" stroke-width="0.9"/><path d="M2.1 1v4.7M3.7 1v4.7" stroke="#3d5064" stroke-width="0.55"/></svg>
<div style="left:1008.2px;top:136.5px;width:6px;height:189.5px;background:#fbfbfb;border-left:1px solid #ececec"></div>
<svg style="left:1009.3px;top:139.5px;" width="4" height="2.5" viewBox="0 0 4 2.5"><path d="M0.5 2l1.5-1.5 1.5 1.5" fill="none" stroke="#555" stroke-width="0.7"/></svg>
<svg style="left:1009.3px;top:321.5px;" width="4" height="2.5" viewBox="0 0 4 2.5"><path d="M0.5 0.5l1.5 1.5 1.5-1.5" fill="none" stroke="#555" stroke-width="0.7"/></svg>
<div style="left:1008.7px;top:144px;width:5.5px;height:157.6px;background:#c9cdd2"></div>
<div style="left:1010.3px;top:217.4px;width:2.2px;height:9.4px;border-left:0.6px solid #eee;border-right:0.6px solid #eee"></div>
<div style="left:315.5px;top:332.5px;width:704px;height:45px;background:#f0f1f2;border-top:1px solid #d6d8da;border-left:1px solid #d6d8da"></div>
<svg style="left:324px;top:334px;" width="700" height="6" viewBox="0 0 700 6"><rect x="5.46" y="4.6" width="0.8" height="1.4" fill="#444"/><rect x="10.72" y="3.2" width="0.8" height="2.8" fill="#555"/><rect x="15.98" y="4.6" width="0.8" height="1.4" fill="#444"/><rect x="21.24" y="3.2" width="0.8" height="2.8" fill="#555"/><rect x="26.50" y="4.6" width="0.8" height="1.4" fill="#444"/><rect x="31.76" y="3.2" width="0.8" height="2.8" fill="#555"/><rect x="37.02" y="4.6" width="0.8" height="1.4" fill="#444"/><rect x="42.28" y="3.2" width="0.8" height="2.8" fill="#555"/><rect x="47.54" y="4.6" width="0.8" height="1.4" fill="#444"/><rect x="52.80" y="0.7" width="0.9" height="5.3" fill="#333"/><rect x="58.06" y="4.6" width="0.8" height="1.4" fill="#444"/><rect x="63.32" y="3.2" width="0.8" height="2.8" fill="#555"/><rect x="68.58" y="4.6" width="0.8" height="1.4" fill="#444"/><rect x="73.84" y="3.2" width="0.8" height="2.8" fill="#555"/><rect x="79.10" y="4.6" width="0.8" height="1.4" fill="#444"/><rect x="84.36" y="3.2" width="0.8" height="2.8" fill="#555"/><rect x="89.62" y="4.6" width="0.8" height="1.4" fill="#444"/><rect x="94.88" y="3.2" width="0.8" height="2.8" fill="#555"/><rect x="100.14" y="4.6" width="0.8" height="1.4" fill="#444"/><rect x="105.40" y="0.7" width="0.9" height="5.3" fill="#333"/><rect x="110.66" y="4.6" width="0.8" height="1.4" fill="#444"/><rect x="115.92" y="3.2" width="0.8" height="2.8" fill="#555"/><rect x="121.18" y="4.6" width="0.8" height="1.4" fill="#444"/><rect x="126.44" y="3.2" width="0.8" height="2.8" fill="#555"/><rect x="131.70" y="4.6" width="0.8" height="1.4" fill="#444"/><rect x="136.96" y="3.2" width="0.8" height="2.8" fill="#555"/><rect x="142.22" y="4.6" width="0.8" height="1.4" fill="#444"/><rect x="147.48" y="3.2" width="0.8" height="2.8" fill="#555"/><rect x="152.74" y="4.6" width="0.8" height="1.4" fill="#444"/><rect x="158.00" y="0.7" width="0.9" height="5.3" fill="#333"/><rect x="163.26" y="4.6" width="0.8" height="1.4" fill="#444"/><rect x="168.52" y="3.2" width="0.8" height="2.8" fill="#555"/><rect x="173.78" y="4.6" width="0.8" height="1.4" fill="#444"/><rect x="179.04" y="3.2" width="0.8" height="2.8" fill="#555"/><rect x="184.30" y="4.6" width="0.8" height="1.4" fill="#444"/><rect x="189.56" y="3.2" width="0.8" height="2.8" fill="#555"/><rect x="194.82" y="4.6" width="0.8" height="1.4" fill="#444"/><rect x="200.08" y="3.2" width="0.8" height="2.8" fill="#555"/><rect x="205.34" y="4.6" width="0.8" height="1.4" fill="#444"/><rect x="210.60" y="0.7" width="0.9" height="5.3" fill="#333"/><rect x="215.86" y="4.6" width="0.8" height="1.4" fill="#444"/><rect x="221.12" y="3.2" width="0.8" height="2.8" fill="#555"/><rect x="226.38" y="4.6" width="0.8" height="1.4" fill="#444"/><rect x="231.64" y="3.2" width="0.8" height="2.8" fill="#555"/><rect x="236.90" y="4.6" width="0.8" height="1.4" fill="#444"/><rect x="242.16" y="3.2" width="0.8" height="2.8" fill="#555"/><rect x="247.42" y="4.6" width="0.8" height="1.4" fill="#444"/><rect x="252.68" y="3.2" width="0.8" height="2.8" fill="#555"/><rect x="257.94" y="4.6" width="0.8" height="1.4" fill="#444"/><rect x="263.20" y="0.7" width="0.9" height="5.3" fill="#333"/><rect x="268.46" y="4.6" width="0.8" height="1.4" fill="#444"/><rect x="273.72" y="3.2" width="0.8" height="2.8" fill="#555"/><rect x="278.98" y="4.6" width="0.8" height="1.4" fill="#444"/><rect x="284.24" y="3.2" width="0.8" height="2.8" fill="#555"/><rect x="289.50" y="4.6" width="0.8" height="1.4" fill="#444"/><rect x="294.76" y="3.2" width="0.8" height="2.8" fill="#555"/><rect x="300.02" y="4.6" width="0.8" height="1.4" fill="#444"/><rect x="305.28" y="3.2" width="0.8" height="2.8" fill="#555"/><rect x="310.54" y="4.6" width="0.8" height="1.4" fill="#444"/><rect x="315.80" y="0.7" width="0.9" height="5.3" fill="#333"/><rect x="321.06" y="4.6" width="0.8" height="1.4" fill="#444"/><rect x="326.32" y="3.2" width="0.8" height="2.8" fill="#555"/><rect x="331.58" y="4.6" width="0.8" height="1.4" fill="#444"/><rect x="336.84" y="3.2" width="0.8" height="2.8" fill="#555"/><rect x="342.10" y="4.6" width="0.8" height="1.4" fill="#444"/><rect x="347.36" y="3.2" width="0.8" height="2.8" fill="#555"/><rect x="352.62" y="4.6" width="0.8" height="1.4" fill="#444"/><rect x="357.88" y="3.2" width="0.8" height="2.8" fill="#555"/><rect x="363.14" y="4.6" width="0.8" height="1.4" fill="#444"/><rect x="368.40" y="0.7" width="0.9" height="5.3" fill="#333"/><rect x="373.66" y="4.6" width="0.8" height="1.4" fill="#444"/><rect x="378.92" y="3.2" width="0.8" height="2.8" fill="#555"/><rect x="384.18" y="4.6" width="0.8" height="1.4" fill="#444"/><rect x="389.44" y="3.2" width="0.8" height="2.8" fill="#555"/><rect x="394.70" y="4.6" width="0.8" height="1.4" fill="#444"/><rect x="399.96" y="3.2" width="0.8" height="2.8" fill="#555"/><rect x="405.22" y="4.6" width="0.8" height="1.4" fill="#444"/><rect x="410.48" y="3.2" width="0.8" height="2.8" fill="#555"/><rect x="415.74" y="4.6" width="0.8" height="1.4" fill="#444"/><rect x="421.00" y="0.7" width="0.9" height="5.3" fill="#333"/><rect x="426.26" y="4.6" width="0.8" height="1.4" fill="#444"/><rect x="431.52" y="3.2" width="0.8" height="2.8" fill="#555"/><rect x="436.78" y="4.6" width="0.8" height="1.4" fill="#444"/><rect x="442.04" y="3.2" width="0.8" height="2.8" fill="#555"/><rect x="447.30" y="4.6" width="0.8" height="1.4" fill="#444"/><rect x="452.56" y="3.2" width="0.8" height="2.8" fill="#555"/><rect x="457.82" y="4.6" width="0.8" height="1.4" fill="#444"/><rect x="463.08" y="3.2" width="0.8" height="2.8" fill="#555"/><rect x="468.34" y="4.6" width="0.8" height="1.4" fill="#444"/><rect x="473.60" y="0.7" width="0.9" height="5.3" fill="#333"/><rect x="478.86" y="4.6" width="0.8" height="1.4" fill="#444"/><rect x="484.12" y="3.2" width="0.8" height="2.8" fill="#555"/><rect x="489.38" y="4.6" width="0.8" height="1.4" fill="#444"/><rect x="494.64" y="3.2" width="0.8" height="2.8" fill="#555"/><rect x="499.90" y="4.6" width="0.8" height="1.4" fill="#444"/><rect x="505.16" y="3.2" width="0.8" height="2.8" fill="#555"/><rect x="510.42" y="4.6" width="0.8" height="1.4" fill="#444"/><rect x="515.68" y="3.2" width="0.8" height="2.8" fill="#555"/><rect x="520.94" y="4.6" width="0.8" height="1.4" fill="#444"/><rect x="526.20" y="0.7" width="0.9" height="5.3" fill="#333"/><rect x="531.46" y="4.6" width="0.8" height="1.4" fill="#444"/><rect x="536.72" y="3.2" width="0.8" height="2.8" fill="#555"/><rect x="541.98" y="4.6" width="0.8" height="1.4" fill="#444"/><rect x="547.24" y="3.2" width="0.8" height="2.8" fill="#555"/><rect x="552.50" y="4.6" width="0.8" height="1.4" fill="#444"/><rect x="557.76" y="3.2" width="0.8" height="2.8" fill="#555"/><rect x="563.02" y="4.6" width="0.8" height="1.4" fill="#444"/><rect x="568.28" y="3.2" width="0.8" height="2.8" fill="#555"/><rect x="573.54" y="4.6" width="0.8" height="1.4" fill="#444"/><rect x="578.80" y="0.7" width="0.9" height="5.3" fill="#333"/><rect x="584.06" y="4.6" width="0.8" height="1.4" fill="#444"/><rect x="589.32" y="3.2" width="0.8" height="2.8" fill="#555"/><rect x="594.58" y="4.6" width="0.8" height="1.4" fill="#444"/><rect x="599.84" y="3.2" width="0.8" height="2.8" fill="#555"/><rect x="605.10" y="4.6" width="0.8" height="1.4" fill="#444"/><rect x="610.36" y="3.2" width="0.8" height="2.8" fill="#555"/><rect x="615.62" y="4.6" width="0.8" height="1.4" fill="#444"/><rect x="620.88" y="3.2" width="0.8" height="2.8" fill="#555"/><rect x="626.14" y="4.6" width="0.8" height="1.4" fill="#444"/><rect x="631.40" y="0.7" width="0.9" height="5.3" fill="#333"/><rect x="636.66" y="4.6" width="0.8" height="1.4" fill="#444"/><rect x="641.92" y="3.2" width="0.8" height="2.8" fill="#555"/><rect x="647.18" y="4.6" width="0.8" height="1.4" fill="#444"/><rect x="652.44" y="3.2" width="0.8" height="2.8" fill="#555"/><rect x="657.70" y="4.6" width="0.8" height="1.4" fill="#444"/><rect x="662.96" y="3.2" width="0.8" height="2.8" fill="#555"/><rect x="668.22" y="4.6" width="0.8" height="1.4" fill="#444"/><rect x="673.48" y="3.2" width="0.8" height="2.8" fill="#555"/><rect x="678.74" y="4.6" width="0.8" height="1.4" fill="#444"/><rect x="686" y="0.5" width="0.9" height="5.5" fill="#333"/></svg>
<div class="t" style="left:378.0px;top:335.14px;font-size:4.8px;line-height:4.8px;color:#333;font-family:'Liberation Sans',sans-serif;transform:scale(0.9366,1.0);transform-origin:0 4.06px;">100</div>
<div class="t" style="left:430.59999999999997px;top:335.14px;font-size:4.8px;line-height:4.8px;color:#333;font-family:'Liberation Sans',sans-serif;transform:scale(0.9366,1.0);transform-origin:0 4.06px;">200</div>
<div class="t" style="left:483.2px;top:335.14px;font-size:4.8px;line-height:4.8px;color:#333;font-family:'Liberation Sans',sans-serif;transform:scale(0.9366,1.0);transform-origin:0 4.06px;">300</div>
<div class="t" style="left:535.8000000000001px;top:335.14px;font-size:4.8px;line-height:4.8px;color:#333;font-family:'Liberation Sans',sans-serif;transform:scale(0.9366,1.0);transform-origin:0 4.06px;">400</div>
<div class="t" style="left:588.4000000000001px;top:335.14px;font-size:4.8px;line-height:4.8px;color:#333;font-family:'Liberation Sans',sans-serif;transform:scale(0.9366,1.0);transform-origin:0 4.06px;">500</div>
<div class="t" style="left:641.0px;top:335.14px;font-size:4.8px;line-height:4.8px;color:#333;font-family:'Liberation Sans',sans-serif;transform:scale(0.9366,1.0);transform-origin:0 4.06px;">600</div>
<div class="t" style="left:693.6px;top:335.14px;font-size:4.8px;line-height:4.8px;color:#333;font-family:'Liberation Sans',sans-serif;transform:scale(0.9366,1.0);transform-origin:0 4.06px;">700</div>
<div class="t" style="left:746.2px;top:335.14px;font-size:4.8px;line-height:4.8px;color:#333;font-family:'Liberation Sans',sans-serif;transform:scale(0.9366,1.0);transform-origin:0 4.06px;">800</div>
<div class="t" style="left:798.8000000000001px;top:335.14px;font-size:4.8px;line-height:4.8px;color:#333;font-family:'Liberation Sans',sans-serif;transform:scale(0.9366,1.0);transform-origin:0 4.06px;">900</div>
<div class="t" style="left:851.4000000000001px;top:335.14px;font-size:4.8px;line-height:4.8px;color:#333;font-family:'Liberation Sans',sans-serif;transform:scale(0.9366,1.0);transform-origin:0 4.06px;">1000</div>
<div class="t" style="left:904.0px;top:335.14px;font-size:4.8px;line-height:4.8px;color:#333;font-family:'Liberation Sans',sans-serif;transform:scale(0.9689,1.0);transform-origin:0 4.06px;">1100</div>
<div class="t" style="left:956.6000000000001px;top:335.14px;font-size:4.8px;line-height:4.8px;color:#333;font-family:'Liberation Sans',sans-serif;transform:scale(0.9366,1.0);transform-origin:0 4.06px;">1200</div>
<svg style="left:317px;top:340px;" width="6" height="40" viewBox="0 0 6 40"><rect x="4.6" y="5.76" width="1.4" height="0.8" fill="#444"/><rect x="3.2" y="11.02" width="2.8" height="0.8" fill="#555"/><rect x="4.6" y="16.28" width="1.4" height="0.8" fill="#444"/><rect x="3.2" y="21.54" width="2.8" height="0.8" fill="#555"/><rect x="4.6" y="26.80" width="1.4" height="0.8" fill="#444"/><rect x="3.2" y="32.06" width="2.8" height="0.8" fill="#555"/></svg>
<div style="left:323.5px;top:340.5px;width:422.5px;height:36.5px;background:#f9f9f9;border-left:1px solid #e0e0e0;border-top:1px solid #e0e0e0"></div>
<div style="left:746px;top:340.5px;width:266.5px;height:36.5px;background:#d5d5d5"></div>
<div style="left:1012.5px;top:340.5px;width:7px;height:36.5px;background:#fbfbfb;border-left:1px solid #e6e6e6"></div>
<svg style="left:1013.8px;top:343.5px;" width="4" height="2.5" viewBox="0 0 4 2.5"><path d="M0.5 2l1.5-1.5 1.5 1.5" fill="none" stroke="#555" stroke-width="0.7"/></svg>
<svg style="left:1013.8px;top:372px;" width="4" height="2.5" viewBox="0 0 4 2.5"><path d="M0.5 0.5l1.5 1.5 1.5-1.5" fill="none" stroke="#555" stroke-width="0.7"/></svg>
<div style="left:1013.2px;top:348.5px;width:5.6px;height:20px;background:#c9cdd2"></div>
<div style="left:1015px;top:353px;width:2px;height:10px;border-left:0.6px solid #eee;border-right:0.6px solid #eee"></div>
<div style="left:1012.5px;top:333.5px;width:7px;height:6.5px;background:#fbfbfb"></div>
<div style="left:340.1px;top:357.2px;width:46.5px;height:13.1px;background:#3f3f3f;border-top:1.6px solid #141414;border-left:1.5px solid #141414;border-bottom:0.8px solid #222"></div>
<svg style="left:372.9px;top:359.4px;" width="6" height="9.3" viewBox="0 0 6 9.3"><rect x="0.70" y="0.00" width="4.60" height="1.40" fill="#1fe01f"/><rect x="0.00" y="0.70" width="1.40" height="3.95" fill="#1fe01f"/><rect x="0.70" y="3.95" width="4.60" height="1.40" fill="#1fe01f"/><rect x="4.60" y="4.65" width="1.40" height="3.95" fill="#1fe01f"/><rect x="0.70" y="7.90" width="4.60" height="1.40" fill="#1fe01f"/></svg>
<svg style="left:379.9px;top:359.4px;" width="6" height="9.3" viewBox="0 0 6 9.3"><rect x="0.70" y="0.00" width="4.60" height="1.40" fill="#1fe01f"/><rect x="4.60" y="0.70" width="1.40" height="3.95" fill="#1fe01f"/><rect x="4.60" y="4.65" width="1.40" height="3.95" fill="#1fe01f"/><rect x="0.70" y="7.90" width="4.60" height="1.40" fill="#1fe01f"/><rect x="0.00" y="4.65" width="1.40" height="3.95" fill="#1fe01f"/><rect x="0.00" y="0.70" width="1.40" height="3.95" fill="#1fe01f"/></svg>
<div style="left:386.7px;top:353.8px;width:253px;height:23.2px;background:#fff;border:1px solid #d0d4d8"></div>
<div style="left:387.7px;top:354.8px;width:245.3px;height:8.5px;background:linear-gradient(#fbfcfd,#f1f3f5);border-bottom:1px solid #d6dadd"></div>
<div class="t" style="left:436px;top:355.67px;font-size:7px;line-height:7px;color:#222;font-weight:bold;-webkit-text-stroke:0;font-family:'Liberation Sans',sans-serif;transform:scale(0.9277,1.0);transform-origin:0 5.93px;">t_stamp</div>
<div class="t" style="left:558.25px;top:356.07px;font-size:7px;line-height:7px;color:#222;font-weight:bold;-webkit-text-stroke:0;font-family:'Liberation Sans',sans-serif;transform:scale(0.9507,1.0);transform-origin:0 5.93px;">Reading</div>
<div style="left:509.6px;top:363.3px;width:0.8px;height:14px;background:#dfe2e5"></div>
<div class="t" style="left:387.8px;top:365.67px;font-size:7px;line-height:7px;color:#333;font-family:'Liberation Sans',sans-serif;transform:scale(0.9024,1.0);transform-origin:0 5.93px;">Feb 14, 2023 2:33 PM</div>
<div class="t" style="left:511.2px;top:365.67px;font-size:7px;line-height:7px;color:#333;font-family:'Liberation Sans',sans-serif;transform:scale(0.8734,1.0);transform-origin:0 5.93px;">15</div>
<div style="left:387.7px;top:374.6px;width:245px;height:0.8px;background:#e2e5e8"></div>
<div style="left:633px;top:363.3px;width:6.5px;height:14px;background:#fafafa;border-left:1px solid #e6e6e6"></div>
<svg style="left:634.5px;top:366.8px;" width="4" height="2.5" viewBox="0 0 4 2.5"><path d="M0.5 2l1.5-1.5 1.5 1.5" fill="none" stroke="#555" stroke-width="0.7"/></svg>
<div style="left:633.5px;top:372px;width:5.5px;height:5px;background:#cfd2d5"></div>
<div style="left:315.5px;top:377px;width:704px;height:14.4px;background:#d7dadd;border-left:1px solid #d0d3d6"></div>
<svg style="left:321.4px;top:381px;" width="8" height="7.4" viewBox="0 0 8 7.4"><ellipse cx="4" cy="3.7" rx="3.3" ry="2.6" fill="none" stroke="#2f4256" stroke-width="1"/><circle cx="4" cy="3.7" r="1.2" fill="#e8772e"/><path d="M0 0.5l1 1M8 0.5l-1 1M0 7l1-1M8 7l-1-1" stroke="#e8772e" stroke-width="0.9"/></svg>
<div style="left:334.1px;top:379.4px;width:38.6px;height:11.6px;background:#eff1f3"></div>
<div style="left:334.1px;top:389.6px;width:38.6px;height:1.5px;background:#3b9ae0"></div>
<svg style="left:337.5px;top:381.2px;" width="8" height="8" viewBox="0 0 8 8"><rect x="0.5" y="0.5" width="7" height="7" fill="#fff" stroke="#3d4d5e" stroke-width="0.9"/><rect x="0.5" y="0.5" width="7" height="2" fill="#3d4d5e"/><rect x="1.2" y="1" width="2" height="0.9" fill="#e07a2e"/></svg>
<div class="t" style="left:347.6px;top:382.15px;font-size:7.5px;line-height:7.5px;color:#222;font-weight:bold;-webkit-text-stroke:0;font-family:'Liberation Sans',sans-serif;transform:scale(0.9073,1.0);transform-origin:0 6.35px;">test</div>
<svg style="left:366px;top:383px;" width="4" height="4" viewBox="0 0 4 4"><path d="M0.3 0.3l3.4 3.4M3.7 0.3l-3.4 3.4" stroke="#333" stroke-width="0.9"/></svg>
<div style="left:315.5px;top:391.4px;width:704px;height:4px;background:#eceef0"></div>
<div style="left:661.1px;top:392.6px;width:12.6px;height:1.6px;background:#d3d6d9"></div>
<div style="left:661.1px;top:330.6px;width:12.6px;height:1.5px;background:#d3d6d9"></div>
<div style="left:315.5px;top:395.5px;width:704px;height:9.5px;background:#d7dadd;border-left:1px solid #d0d3d6"></div>
<div class="t" style="left:318.2px;top:398.37px;font-size:6.3px;line-height:6.3px;color:#333;font-family:'Liberation Sans',sans-serif;transform:scale(0.9069,1.0);transform-origin:0 5.33px;">Output Console</div>
<svg style="left:991.5px;top:397.5px;" width="26" height="6" viewBox="0 0 26 6"><rect x="0.5" y="2" width="3.6" height="3.5" fill="none" stroke="#4a5868" stroke-width="0.9"/><rect x="0.5" y="2" width="3.6" height="1.2" fill="#4a5868"/><path d="M2.2 1.6v-1.1h3.4v3.4h-1.1" fill="none" stroke="#4a5868" stroke-width="0.8"/><path d="M10.2 4.8h4.2" stroke="#4a5868" stroke-width="1.1"/><path d="M19.7 0.6l4.8 4.8M24.5 0.6l-4.8 4.8" stroke="#4a5868" stroke-width="1.1"/></svg>
<div style="left:315.5px;top:405px;width:704px;height:11px;background:#fff;border-left:1px solid #d0d3d6;border-top:1px solid #e0e0e0"></div>
<svg style="left:322px;top:409.5px;" width="8" height="7" viewBox="0 0 8 7"><path d="M0.5 5l2-2 2 2" fill="none" stroke="#2f4256" stroke-width="0.9"/><rect x="4.5" y="0.5" width="3" height="4" fill="none" stroke="#2f4256" stroke-width="0.9"/></svg>
<svg style="left:336px;top:410px;" width="7" height="6" viewBox="0 0 7 6"><path d="M0.5 2.5l2.5-2 4 4-2.5 2z" fill="#2f4256"/></svg>
</body></html>
